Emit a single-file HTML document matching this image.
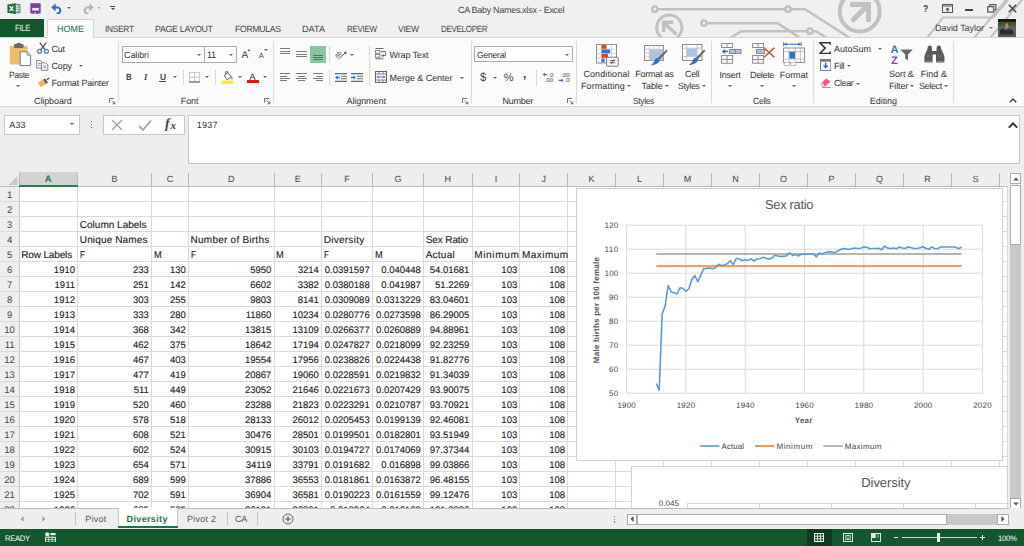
<!DOCTYPE html>
<html><head><meta charset="utf-8"><title>Excel</title>
<style>
*{box-sizing:border-box;margin:0;padding:0}
html,body{width:1024px;height:546px;overflow:hidden;background:#f0f0f0;font-family:"Liberation Sans",sans-serif}
.a{position:absolute;display:block}
.t{position:absolute;display:block;white-space:nowrap;font-family:"Liberation Sans",sans-serif;text-rendering:geometricPrecision}
#ribbon{left:0;top:37px;width:1024px;height:69.5px;background:#fbfbfb;border-top:1px solid #d4d4d4;border-bottom:1px solid #d4d4d4}
.cells .t{-webkit-text-stroke:0.12px #1a1a1a}
#fbar{left:0;top:106.5px;width:1024px;height:66px;background:#eeeeee}
</style></head><body>
<div id="ribbon" class="a"></div>
<div id="fbar" class="a"></div>
<!-- gen_title -->
<svg class="a" style="left:0;top:0" width="1024" height="37" viewBox="0 0 1024 37">
<g fill="none" stroke="#c1c1c1" stroke-width="2.5">
<path d="M658 9.2 H785"/><path d="M791 9.2 H805 L850 38"/>
<circle cx="654.8" cy="9.2" r="2.6" fill="#f0f0f0"/><circle cx="787.9" cy="9.2" r="2.6" fill="#f0f0f0"/>
<path d="M707 23.2 H777.7 L800 38"/><circle cx="704" cy="23.2" r="2.6" fill="#f0f0f0"/>
<path d="M730 38 L741.5 31.2 H807"/><path d="M813 31.2 H816 L827 38"/><circle cx="810" cy="31.2" r="2.6" fill="#f0f0f0"/>
<circle cx="669.3" cy="27.6" r="12.6" stroke-width="3"/>
<circle cx="859.7" cy="11.5" r="20" stroke-width="4"/>
<path d="M927 38 L943 17.5 H993 L1008 0" stroke-width="2"/>
<path d="M974 38 L1006 0" stroke-width="2"/><path d="M990 38 L1022 0" stroke-width="2"/>
</g>
<g fill="#c1c1c1">
<path d="M662 20.6 H673.4 V24 H667.8 L677.6 33.2 L675.2 35.6 L665.4 26.4 V32 H662 Z"/>
<path d="M850 2 H871 V22 H866 V10.5 L853.5 23 L850 19.5 L862.5 7 H850 Z"/>
</g></svg>
<svg class="a" style="left:7.00px;top:3.00px" width="14" height="12" viewBox="0 0 14 12"><path d="M7 1 L13 1.6 V9.6 L7 10.2 Z" fill="#fff" stroke="#2a7a4c" stroke-width="0.9"/><path d="M9.4 3h3.2M9.4 4.8h3.2M9.4 6.6h3.2M9.4 8.4h3.2" stroke="#2a7a4c" stroke-width="0.8"/><path d="M0.4 1.4 L8.8 0.2 V11 L0.4 9.8 Z" fill="#1e6b3e"/><path d="M2.6 3.2 L6.4 8.2 M6.4 3.2 L2.6 8.2" stroke="#fff" stroke-width="1.3"/></svg>
<svg class="a" style="left:30.00px;top:3.00px" width="11" height="11" viewBox="0 0 11 11"><rect x="0.3" y="0.2" width="10.4" height="10.4" rx="0.6" fill="#7b3fa8"/><rect x="2.2" y="4.9" width="6.6" height="2.7" fill="#f4eef8"/><rect x="3" y="8.8" width="4.6" height="1.8" fill="#5a2782"/><rect x="4.4" y="9" width="1.4" height="1.6" fill="#f0f0f0"/></svg>
<svg class="a" style="left:51.00px;top:2.50px" width="13" height="11" viewBox="0 0 13 11"><path d="M2.4 4.4 H7.2 A3.2 3.2 0 0 1 7.2 10.4 H5.6" fill="none" stroke="#2f6bc0" stroke-width="2"/><path d="M0.2 4.4 L4.6 0.6 V8.2 Z" fill="#2f6bc0"/></svg>
<div class="a" style="left:66.50px;top:6.80px;width:0;height:0;border-left:2px solid transparent;border-right:2px solid transparent;border-top:2px solid #666"></div>
<svg class="a" style="left:81.00px;top:2.50px" width="13" height="11" viewBox="0 0 13 11"><path d="M10.6 4.4 H5.8 A3.2 3.2 0 0 0 5.8 10.4 H7.4" fill="none" stroke="#b4b4b4" stroke-width="2"/><path d="M12.8 4.4 L8.4 0.6 V8.2 Z" fill="#b4b4b4"/></svg>
<div class="a" style="left:96.70px;top:6.80px;width:0;height:0;border-left:2px solid transparent;border-right:2px solid transparent;border-top:2px solid #b8b8b8"></div>
<div class="a" style="left:110.40px;top:6.00px;width:5.00px;height:1.10px;background:#444;"></div>
<div class="a" style="left:110.50px;top:8.20px;width:0;height:0;border-left:2.4px solid transparent;border-right:2.4px solid transparent;border-top:2.4px solid #444"></div>
<span class="t" style="left:457.50px;top:5px;font-size:9px;line-height:11px;color:#444;letter-spacing:-0.300px;transform:scaleX(0.9996);transform-origin:0 50%;">CA Baby Names.xlsx - Excel</span>
<span class="t" style="left:922.50px;top:4px;font-size:10px;line-height:12px;color:#444;letter-spacing:-0.300px;transform:scaleX(0.8607);transform-origin:0 50%;font-weight:bold;">?</span>
<svg class="a" style="left:942.00px;top:4.00px" width="11" height="9" viewBox="0 0 11 9"><rect x="0.5" y="0.5" width="10" height="8" fill="none" stroke="#555" stroke-width="1"/><path d="M0.5 2H10.5" stroke="#555" stroke-width="1"/><path d="M5.5 3.4 L7.8 5.6 H6.3 V7.4 H4.7 V5.6 H3.2 Z" fill="#555"/></svg>
<div class="a" style="left:964.50px;top:9.00px;width:8.50px;height:1.60px;background:#444;"></div>
<svg class="a" style="left:986.50px;top:4.00px" width="10" height="9" viewBox="0 0 10 9"><rect x="0.7" y="2.7" width="6" height="5.4" fill="none" stroke="#555" stroke-width="1.2"/><path d="M2.8 2.7 V0.7 H8.9 V6 H6.9" fill="none" stroke="#555" stroke-width="1.2"/></svg>
<svg class="a" style="left:1008.00px;top:4.00px" width="9" height="9" viewBox="0 0 9 9"><path d="M0.8 0.8 L8.2 8.2 M8.2 0.8 L0.8 8.2" stroke="#444" stroke-width="1.5"/></svg>
<span class="t" style="left:935.00px;top:23px;font-size:9px;line-height:11px;color:#444;letter-spacing:-0.033px;">David Taylor</span>
<div class="a" style="left:989.00px;top:26.50px;width:0;height:0;border-left:2px solid transparent;border-right:2px solid transparent;border-top:2px solid #777"></div>
<svg class="a" style="left:998.40px;top:18.80px" width="18" height="17.8" viewBox="0 0 18 17.8"><rect width="18" height="17.8" fill="#55606a"/><rect width="18" height="3" fill="#1a1512"/><rect y="2.8" width="18" height="4.4" fill="#3d5528"/><rect y="6.8" width="18" height="1" fill="#6a6a58"/><path d="M7.6 4.6 L9.6 4.2 L10.6 7.4 L9.4 9.6 L7 9.4 Z" fill="#c08a50"/><path d="M2 11 Q5 8.6 8 11.4 Q11 9 15 11.6 L16 15.4 L2 15.6 Z" fill="#2a2b33"/><rect y="16" width="18" height="1.8" fill="#4c5a46"/></svg>
<div class="a" style="left:0.00px;top:19.00px;width:44.20px;height:18.30px;background:#15572c;"></div>
<span class="t" style="left:14.60px;top:23px;font-size:9px;line-height:11px;color:#e4efe7;letter-spacing:-0.300px;transform:scaleX(0.8449);transform-origin:0 50%;">FILE</span>
<div class="a" style="left:47.00px;top:19.00px;width:46.50px;height:19.00px;background:#fcfcfc;border:1px solid #d4d4d4;border-bottom:none;"></div>
<span class="t" style="left:57.00px;top:24px;font-size:9px;line-height:11px;color:#217346;letter-spacing:-0.001px;">HOME</span>
<span class="t" style="left:104.50px;top:24px;font-size:9px;line-height:11px;color:#444;letter-spacing:-0.300px;transform:scaleX(0.9252);transform-origin:0 50%;">INSERT</span>
<span class="t" style="left:155.00px;top:24px;font-size:9px;line-height:11px;color:#444;letter-spacing:-0.300px;transform:scaleX(0.9799);transform-origin:0 50%;">PAGE LAYOUT</span>
<span class="t" style="left:234.50px;top:24px;font-size:9px;line-height:11px;color:#444;letter-spacing:-0.300px;transform:scaleX(0.9601);transform-origin:0 50%;">FORMULAS</span>
<span class="t" style="left:302.00px;top:24px;font-size:9px;line-height:11px;color:#444;letter-spacing:0.110px;">DATA</span>
<span class="t" style="left:347.00px;top:24px;font-size:9px;line-height:11px;color:#444;letter-spacing:-0.300px;transform:scaleX(0.8822);transform-origin:0 50%;">REVIEW</span>
<span class="t" style="left:398.00px;top:24px;font-size:9px;line-height:11px;color:#444;letter-spacing:-0.300px;transform:scaleX(0.9501);transform-origin:0 50%;">VIEW</span>
<span class="t" style="left:441.00px;top:24px;font-size:9px;line-height:11px;color:#444;letter-spacing:-0.300px;transform:scaleX(0.8836);transform-origin:0 50%;">DEVELOPER</span>
<!-- gen_ribbon -->
<div class="a" style="left:117.70px;top:41.00px;width:1.00px;height:62.00px;background:#dadada;"></div>
<div class="a" style="left:273.10px;top:41.00px;width:1.00px;height:62.00px;background:#dadada;"></div>
<div class="a" style="left:471.00px;top:41.00px;width:1.00px;height:62.00px;background:#dadada;"></div>
<div class="a" style="left:575.50px;top:41.00px;width:1.00px;height:62.00px;background:#dadada;"></div>
<div class="a" style="left:711.30px;top:41.00px;width:1.00px;height:62.00px;background:#dadada;"></div>
<div class="a" style="left:813.20px;top:41.00px;width:1.00px;height:62.00px;background:#dadada;"></div>
<div class="a" style="left:953.20px;top:41.00px;width:1.00px;height:62.00px;background:#dadada;"></div>
<svg class="a" style="left:9.00px;top:43.00px" width="23" height="24" viewBox="0 0 23 24"><rect x="0.8" y="3" width="17.5" height="18.5" rx="1" fill="#e9bd6a"/>
<rect x="5" y="1" width="9.5" height="4" rx="0.8" fill="#6a6a6a"/><rect x="7.6" y="0" width="4.2" height="2.5" rx="1" fill="#6a6a6a"/>
<path d="M11.2 8.8 H18.2 L21.6 12.2 V22.6 H11.2 Z" fill="#fff" stroke="#7a7a7a" stroke-width="1"/><path d="M18.2 8.8 V12.2 H21.6" fill="none" stroke="#7a7a7a" stroke-width="0.8"/></svg>
<span class="t" style="left:8.60px;top:70px;font-size:9px;line-height:11px;color:#333;letter-spacing:-0.300px;transform:scaleX(0.9443);transform-origin:0 50%;">Paste</span>
<div class="a" style="left:16.20px;top:84.50px;width:0;height:0;border-left:2.2px solid transparent;border-right:2.2px solid transparent;border-top:2.2px solid #666"></div>
<svg class="a" style="left:36.50px;top:42.00px" width="12" height="12" viewBox="0 0 12 12"><path d="M2.8 0.6 L8.6 8.4 M9.2 0.6 L3.4 8.4" stroke="#555" stroke-width="1.3" fill="none"/><circle cx="2.6" cy="9.2" r="2" fill="none" stroke="#3b73c4" stroke-width="1.1"/><circle cx="9.4" cy="9.2" r="2" fill="none" stroke="#3b73c4" stroke-width="1.1"/></svg>
<span class="t" style="left:51.50px;top:44px;font-size:9px;line-height:11px;color:#333;letter-spacing:-0.253px;">Cut</span>
<svg class="a" style="left:36.00px;top:60.00px" width="12.5" height="11" viewBox="0 0 12.5 11"><path d="M0.6 0.6 H4.6 L6.6 2.6 V8 H0.6 Z" fill="#fff" stroke="#777" stroke-width="0.9"/><path d="M5.4 2.8 H9.6 L11.8 5 V10.4 H5.4 Z" fill="#fff" stroke="#777" stroke-width="0.9"/><path d="M2 3.4h2.6M2 5.2h2.6M7 6h3.4M7 7.8h3.4" stroke="#4a7fcb" stroke-width="0.8"/></svg>
<span class="t" style="left:51.50px;top:61px;font-size:9px;line-height:11px;color:#333;letter-spacing:-0.171px;">Copy</span>
<div class="a" style="left:79.00px;top:65.00px;width:0;height:0;border-left:2px solid transparent;border-right:2px solid transparent;border-top:2px solid #666"></div>
<svg class="a" style="left:36.50px;top:77.00px" width="13" height="11" viewBox="0 0 13 11"><path d="M1 5.8 L6.2 2.6 L9 7 L3.8 10.2 Z" fill="#e7b45b"/><path d="M6.2 2.6 L8.2 1.4 L11 5.8 L9 7 Z" fill="#555"/><path d="M9.4 2 L11.8 0.4 L12.6 1.6 L10.2 3.2 Z" fill="#555"/></svg>
<span class="t" style="left:51.50px;top:78px;font-size:9px;line-height:11px;color:#333;letter-spacing:-0.156px;">Format Painter</span>
<span class="t" style="left:34.00px;top:96px;font-size:9px;line-height:11px;color:#333;letter-spacing:-0.103px;">Clipboard</span>
<svg class="a" style="left:109.00px;top:98.00px" width="7" height="7" viewBox="0 0 7 7"><path d="M0.5 5 V0.5 H5" fill="none" stroke="#777" stroke-width="1"/><path d="M2.5 2.5 L5.6 5.6" stroke="#777" stroke-width="1"/><path d="M6.3 3.2 V6.3 H3.2 Z" fill="#777"/></svg>
<div class="a" style="left:121.50px;top:46.00px;width:115.00px;height:16.50px;background:#fff;border:1px solid #ababab;"></div>
<div class="a" style="left:204.00px;top:46.00px;width:1.00px;height:16.50px;background:#ababab;"></div>
<span class="t" style="left:124.00px;top:50px;font-size:9px;line-height:11px;color:#333;letter-spacing:-0.085px;">Calibri</span>
<div class="a" style="left:196.80px;top:53.50px;width:0;height:0;border-left:2px solid transparent;border-right:2px solid transparent;border-top:2px solid #666"></div>
<span class="t" style="left:207.20px;top:50px;font-size:9.5px;line-height:11px;color:#333;letter-spacing:-0.300px;transform:scaleX(0.9622);transform-origin:0 50%;">11</span>
<div class="a" style="left:229.00px;top:53.50px;width:0;height:0;border-left:2px solid transparent;border-right:2px solid transparent;border-top:2px solid #666"></div>
<span class="t" style="left:241.60px;top:50px;font-size:10px;line-height:12px;color:#3a3a3a;letter-spacing:0.530px;">A</span>
<svg class="a" style="left:247.40px;top:48.80px" width="3.8" height="2.2" viewBox="0 0 3.8 2.2"><path d="M0 2.2 L1.9 0 L3.8 2.2 Z" fill="#3b73c4"/></svg>
<span class="t" style="left:258.70px;top:51px;font-size:7.5px;line-height:9px;color:#3a3a3a;letter-spacing:0.798px;">A</span>
<svg class="a" style="left:263.80px;top:48.60px" width="3.8" height="2.2" viewBox="0 0 3.8 2.2"><path d="M0 0 L1.9 2.2 L3.8 0 Z" fill="#3b73c4"/></svg>
<span class="t" style="left:126.30px;top:72px;font-size:9px;line-height:11px;color:#444;letter-spacing:-0.300px;transform:scaleX(0.8871);transform-origin:0 50%;font-weight:bold;">B</span>
<span class="t" style="left:144.20px;top:72px;font-size:9px;line-height:11px;color:#444;letter-spacing:-0.300px;transform:scaleX(0.9369);transform-origin:0 50%;font-weight:bold;font-style:italic;font-family:'Liberation Serif',serif;">I</span>
<span class="t" style="left:159.50px;top:72px;font-size:9px;line-height:11px;color:#444;letter-spacing:-0.300px;transform:scaleX(0.9355);transform-origin:0 50%;font-weight:bold;">U</span>
<div class="a" style="left:159.30px;top:81.30px;width:6.40px;height:1.00px;background:#444;"></div>
<div class="a" style="left:173.00px;top:76.30px;width:0;height:0;border-left:2px solid transparent;border-right:2px solid transparent;border-top:2px solid #666"></div>
<div class="a" style="left:183.00px;top:69.50px;width:1.00px;height:15.00px;background:#dadada;"></div>
<svg class="a" style="left:189.00px;top:72.00px" width="11" height="10.5" viewBox="0 0 11 10.5"><rect x="0.5" y="0.5" width="10" height="9.5" fill="none" stroke="#9a9a9a" stroke-width="1" stroke-dasharray="1 1"/><path d="M5.5 0.5V10M0.5 5.2H10.5" stroke="#9a9a9a" stroke-width="1" stroke-dasharray="1 1"/><path d="M0 10H11" stroke="#555" stroke-width="1"/></svg>
<div class="a" style="left:205.40px;top:76.30px;width:0;height:0;border-left:2px solid transparent;border-right:2px solid transparent;border-top:2px solid #666"></div>
<div class="a" style="left:215.00px;top:69.50px;width:1.00px;height:15.00px;background:#dadada;"></div>
<svg class="a" style="left:221.00px;top:70.50px" width="13" height="13.5" viewBox="0 0 13 13.5"><path d="M3.2 4.4 L6.4 1.6 L10.2 5.6 L6.2 8.8 Z" fill="#fff" stroke="#555" stroke-width="1"/><path d="M4.6 3 V1.2 A1.1 1.1 0 0 1 6.8 1.2 V2.4" fill="none" stroke="#555" stroke-width="0.9"/><path d="M10.4 5 Q12.4 6.4 11.2 8.8 Q9.6 7.4 10.4 5Z" fill="#3b73c4"/><rect x="0.5" y="9.7" width="11.6" height="3.2" fill="#ffee00"/></svg>
<div class="a" style="left:237.50px;top:76.30px;width:0;height:0;border-left:2px solid transparent;border-right:2px solid transparent;border-top:2px solid #666"></div>
<span class="t" style="left:249.20px;top:72px;font-size:9.5px;line-height:11px;color:#3a3a3a;letter-spacing:0.964px;">A</span>
<div class="a" style="left:246.80px;top:80.10px;width:11.80px;height:3.30px;background:#ee1111;"></div>
<div class="a" style="left:263.20px;top:76.30px;width:0;height:0;border-left:2px solid transparent;border-right:2px solid transparent;border-top:2px solid #666"></div>
<span class="t" style="left:180.80px;top:96px;font-size:9px;line-height:11px;color:#333;letter-spacing:-0.103px;">Font</span>
<svg class="a" style="left:264.00px;top:98.00px" width="7" height="7" viewBox="0 0 7 7"><path d="M0.5 5 V0.5 H5" fill="none" stroke="#777" stroke-width="1"/><path d="M2.5 2.5 L5.6 5.6" stroke="#777" stroke-width="1"/><path d="M6.3 3.2 V6.3 H3.2 Z" fill="#777"/></svg>
<div class="a" style="left:279.80px;top:48.30px;width:10.40px;height:1.10px;background:#7a7a7a;"></div><div class="a" style="left:279.80px;top:50.70px;width:10.40px;height:1.10px;background:#7a7a7a;"></div><div class="a" style="left:279.80px;top:53.10px;width:10.40px;height:1.10px;background:#7a7a7a;"></div>
<div class="a" style="left:296.20px;top:51.40px;width:10.40px;height:1.10px;background:#7a7a7a;"></div><div class="a" style="left:296.20px;top:53.80px;width:10.40px;height:1.10px;background:#7a7a7a;"></div><div class="a" style="left:296.20px;top:56.20px;width:10.40px;height:1.10px;background:#7a7a7a;"></div>
<div class="a" style="left:309.60px;top:45.60px;width:16.60px;height:17.60px;background:#86c7a0;"></div>
<div class="a" style="left:312.60px;top:54.60px;width:10.60px;height:1.10px;background:#4d7a5f;"></div><div class="a" style="left:312.60px;top:57.00px;width:10.60px;height:1.10px;background:#4d7a5f;"></div><div class="a" style="left:312.60px;top:59.40px;width:10.60px;height:1.10px;background:#4d7a5f;"></div>
<div class="a" style="left:329.00px;top:46.00px;width:1.00px;height:16.00px;background:#dadada;"></div>
<svg class="a" style="left:335.00px;top:48.50px" width="13" height="11" viewBox="0 0 13 11"><text x="0" y="7" font-family="Liberation Sans" font-size="6.5" fill="#555" transform="rotate(-40 4 6)">ab</text><path d="M3.4 10 L10.8 3.4" stroke="#555" stroke-width="1"/><path d="M11.8 2.4 L8.8 3.2 L10.8 5.4 Z" fill="#555"/></svg>
<div class="a" style="left:350.00px;top:53.50px;width:0;height:0;border-left:2px solid transparent;border-right:2px solid transparent;border-top:2px solid #666"></div>
<div class="a" style="left:369.00px;top:45.00px;width:1.00px;height:40.00px;background:#dadada;"></div>
<svg class="a" style="left:375.00px;top:48.00px" width="12" height="11.5" viewBox="0 0 12 11.5"><path d="M0.5 0.5H8.5M0.5 10.8H8.5" stroke="#666" stroke-width="1"/><rect x="0.5" y="2.6" width="4.4" height="2.6" fill="#fff" stroke="#666" stroke-width="0.8"/><rect x="0.5" y="6.6" width="4.4" height="2.6" fill="#fff" stroke="#666" stroke-width="0.8"/><path d="M6 3.6 H10.6 V7.6 H7.6" fill="none" stroke="#3b73c4" stroke-width="1"/><path d="M8.4 5.8 L6.2 7.6 L8.4 9.4Z" fill="#3b73c4"/></svg>
<span class="t" style="left:389.60px;top:50px;font-size:9px;line-height:11px;color:#333;letter-spacing:-0.161px;">Wrap Text</span>
<div class="a" style="left:279.80px;top:73.20px;width:10.40px;height:1.10px;background:#7a7a7a;"></div><div class="a" style="left:279.80px;top:75.60px;width:7.00px;height:1.10px;background:#7a7a7a;"></div><div class="a" style="left:279.80px;top:78.00px;width:10.40px;height:1.10px;background:#7a7a7a;"></div><div class="a" style="left:279.80px;top:80.40px;width:7.00px;height:1.10px;background:#7a7a7a;"></div>
<div class="a" style="left:296.20px;top:73.20px;width:10.40px;height:1.10px;background:#7a7a7a;"></div><div class="a" style="left:297.90px;top:75.60px;width:7.00px;height:1.10px;background:#7a7a7a;"></div><div class="a" style="left:296.20px;top:78.00px;width:10.40px;height:1.10px;background:#7a7a7a;"></div><div class="a" style="left:297.90px;top:80.40px;width:7.00px;height:1.10px;background:#7a7a7a;"></div>
<div class="a" style="left:312.60px;top:73.20px;width:10.40px;height:1.10px;background:#7a7a7a;"></div><div class="a" style="left:316.00px;top:75.60px;width:7.00px;height:1.10px;background:#7a7a7a;"></div><div class="a" style="left:312.60px;top:78.00px;width:10.40px;height:1.10px;background:#7a7a7a;"></div><div class="a" style="left:316.00px;top:80.40px;width:7.00px;height:1.10px;background:#7a7a7a;"></div>
<div class="a" style="left:329.00px;top:70.00px;width:1.00px;height:15.00px;background:#dadada;"></div>
<svg class="a" style="left:335.00px;top:72.50px" width="12.5" height="9.5" viewBox="0 0 12.5 9.5"><path d="M0 0.6H12M6 3.2H12M6 5.8H12M0 8.4H12" stroke="#666" stroke-width="1.1"/><path d="M0 4.5 L2.6 2.2 V3.8 H5 V5.2 H2.6 V6.8 Z" fill="#3b73c4"/></svg>
<svg class="a" style="left:351.20px;top:72.50px" width="12.5" height="9.5" viewBox="0 0 12.5 9.5"><path d="M0 0.6H12M6 3.2H12M6 5.8H12M0 8.4H12" stroke="#666" stroke-width="1.1"/><path d="M5 4.5 L2.4 2.2 V3.8 H0 V5.2 H2.4 V6.8 Z" fill="#3b73c4"/></svg>
<svg class="a" style="left:375.00px;top:71.00px" width="12" height="12" viewBox="0 0 12 12"><rect x="0.5" y="0.5" width="11" height="11" fill="#fff" stroke="#666" stroke-width="1"/><path d="M0.5 3H11.5M0.5 9H11.5M4 0.5V3M8 0.5V3M4 9V11.5M8 9V11.5" stroke="#666" stroke-width="0.8"/><path d="M2.6 6H9.4" stroke="#3b73c4" stroke-width="1"/><path d="M1.6 6 L3.6 4.4 V7.6Z M10.4 6 L8.4 4.4 V7.6Z" fill="#3b73c4"/></svg>
<span class="t" style="left:389.60px;top:73px;font-size:9px;line-height:11px;color:#333;letter-spacing:-0.049px;">Merge &amp; Center</span>
<div class="a" style="left:460.00px;top:77.00px;width:0;height:0;border-left:2px solid transparent;border-right:2px solid transparent;border-top:2px solid #666"></div>
<span class="t" style="left:346.50px;top:96px;font-size:9px;line-height:11px;color:#333;letter-spacing:-0.078px;">Alignment</span>
<svg class="a" style="left:461.80px;top:98.00px" width="7" height="7" viewBox="0 0 7 7"><path d="M0.5 5 V0.5 H5" fill="none" stroke="#777" stroke-width="1"/><path d="M2.5 2.5 L5.6 5.6" stroke="#777" stroke-width="1"/><path d="M6.3 3.2 V6.3 H3.2 Z" fill="#777"/></svg>
<div class="a" style="left:474.40px;top:45.80px;width:98.60px;height:16.70px;background:#fff;border:1px solid #ababab;"></div>
<span class="t" style="left:477.30px;top:50px;font-size:9px;line-height:11px;color:#333;letter-spacing:-0.300px;transform:scaleX(0.9629);transform-origin:0 50%;">General</span>
<div class="a" style="left:565.00px;top:53.50px;width:0;height:0;border-left:2px solid transparent;border-right:2px solid transparent;border-top:2px solid #666"></div>
<span class="t" style="left:480.00px;top:70px;font-size:12px;line-height:14px;color:#444;letter-spacing:-0.300px;transform:scaleX(0.9413);transform-origin:0 50%;">$</span>
<div class="a" style="left:493.00px;top:76.50px;width:0;height:0;border-left:2px solid transparent;border-right:2px solid transparent;border-top:2px solid #666"></div>
<span class="t" style="left:503.80px;top:72px;font-size:11px;line-height:13px;color:#444;letter-spacing:-0.281px;">%</span>
<span class="t" style="left:522.50px;top:66px;font-size:13px;line-height:15px;color:#444;letter-spacing:-0.300px;transform:scaleX(0.9060);transform-origin:0 50%;font-weight:bold;">,</span>
<div class="a" style="left:536.20px;top:69.50px;width:1.00px;height:16.00px;background:#dadada;"></div>
<svg class="a" style="left:541.50px;top:71.50px" width="12.5" height="11" viewBox="0 0 12.5 11"><path d="M0.6 2.6 L3 0.6 V2 H5.4 V3.2 H3 V4.6Z" fill="#3b73c4"/><text x="6.4" y="4.6" font-family="Liberation Sans" font-size="6.2" fill="#444">.0</text><text x="2.6" y="10.4" font-family="Liberation Sans" font-size="6.2" fill="#444">.00</text></svg>
<svg class="a" style="left:557.50px;top:71.50px" width="12.5" height="11" viewBox="0 0 12.5 11"><text x="3" y="4.6" font-family="Liberation Sans" font-size="6.2" fill="#444">.00</text><path d="M5.6 8.4 L3.2 6.4 V7.8 H0.6 V9 H3.2 V10.4Z" fill="#3b73c4"/><text x="6.6" y="10.4" font-family="Liberation Sans" font-size="6.2" fill="#444">.0</text></svg>
<span class="t" style="left:502.50px;top:96px;font-size:9px;line-height:11px;color:#333;letter-spacing:-0.263px;">Number</span>
<svg class="a" style="left:566.70px;top:98.00px" width="7" height="7" viewBox="0 0 7 7"><path d="M0.5 5 V0.5 H5" fill="none" stroke="#777" stroke-width="1"/><path d="M2.5 2.5 L5.6 5.6" stroke="#777" stroke-width="1"/><path d="M6.3 3.2 V6.3 H3.2 Z" fill="#777"/></svg>
<!-- gen_ribbon2 -->
<svg class="a" style="left:596.00px;top:43.50px" width="23" height="23" viewBox="0 0 23 23"><rect x="0.5" y="0.5" width="20" height="18.5" fill="#fff" stroke="#8a8a8a" stroke-width="1"/>
<path d="M0.5 5.1H20.5M0.5 9.7H20.5M0.5 14.3H20.5M5.5 0.5V19M10.5 0.5V19M15.5 0.5V19" stroke="#c8c8c8" stroke-width="0.8"/>
<rect x="5.6" y="1" width="4.6" height="3.8" fill="#d8452e"/><rect x="5.6" y="5.5" width="8.6" height="3.8" fill="#3b73c4"/><rect x="5.6" y="10" width="6.4" height="3.8" fill="#d8452e"/><rect x="5.6" y="14.6" width="3" height="3.8" fill="#3b73c4"/>
<rect x="10.6" y="13.2" width="11.6" height="9" rx="0.8" fill="#fff" stroke="#777" stroke-width="1"/>
<path d="M13.6 16.6H19.4M13.6 18.8H19.4M18 15.2L15 20.2" stroke="#555" stroke-width="0.9"/></svg>
<span class="t" style="left:583.40px;top:69px;font-size:9px;line-height:11px;color:#333;letter-spacing:0.096px;">Conditional</span>
<span class="t" style="left:581.00px;top:81px;font-size:9px;line-height:11px;color:#333;letter-spacing:0.076px;">Formatting</span>
<div class="a" style="left:627.00px;top:85.30px;width:0;height:0;border-left:2px solid transparent;border-right:2px solid transparent;border-top:2px solid #666"></div>
<svg class="a" style="left:644.00px;top:44.50px" width="24" height="22" viewBox="0 0 24 22"><rect x="0.5" y="0.5" width="19" height="15" fill="#fff" stroke="#8a8a8a" stroke-width="1"/>
<rect x="5.4" y="4.4" width="14" height="11" fill="#a9c4e8"/>
<path d="M0.5 4.3H19.5M0.5 8H19.5M0.5 11.7H19.5M5.3 0.5V15.5M10 0.5V15.5M14.8 0.5V15.5" stroke="#c4c4c4" stroke-width="0.8"/>
<path d="M22.6 4.6 L23.6 6 L15.6 14.6 L13.8 13 Z" fill="#666"/>
<path d="M13.6 13 L15.8 15 Q14.8 19.6 6.4 20.6 Q10.4 17.4 10.6 15.2 Q11.6 12.6 13.6 13Z" fill="#2f6fc6"/></svg>
<span class="t" style="left:635.30px;top:69px;font-size:9px;line-height:11px;color:#333;letter-spacing:-0.251px;">Format as</span>
<span class="t" style="left:641.60px;top:81px;font-size:9px;line-height:11px;color:#333;letter-spacing:-0.079px;">Table</span>
<div class="a" style="left:665.00px;top:85.30px;width:0;height:0;border-left:2px solid transparent;border-right:2px solid transparent;border-top:2px solid #666"></div>
<svg class="a" style="left:681.50px;top:43.50px" width="24" height="22" viewBox="0 0 24 22"><rect x="0.5" y="0.5" width="19.5" height="16" fill="#fff" stroke="#8a8a8a" stroke-width="1"/>
<path d="M0.5 4.2H20M0.5 12.4H20M4.6 0.5V16.5M15.2 0.5V16.5" stroke="#b8b8b8" stroke-width="0.8"/>
<rect x="5" y="4.6" width="9.8" height="7.4" fill="#a9c4e8"/>
<path d="M22.2 5.4 L23.4 6.8 L16 15.2 L14.2 13.6 Z" fill="#666"/>
<path d="M14 13.6 L16.2 15.6 Q15.2 20.2 6.8 21.2 Q10.8 18 11 15.8 Q12 13.2 14 13.6Z" fill="#2f6fc6"/></svg>
<span class="t" style="left:684.50px;top:69px;font-size:9px;line-height:11px;color:#333;letter-spacing:-0.300px;transform:scaleX(0.9928);transform-origin:0 50%;">Cell</span>
<span class="t" style="left:677.80px;top:81px;font-size:9px;line-height:11px;color:#333;letter-spacing:-0.300px;transform:scaleX(0.9518);transform-origin:0 50%;">Styles</span>
<div class="a" style="left:702.30px;top:85.30px;width:0;height:0;border-left:2px solid transparent;border-right:2px solid transparent;border-top:2px solid #666"></div>
<span class="t" style="left:632.80px;top:96px;font-size:9px;line-height:11px;color:#333;letter-spacing:-0.300px;transform:scaleX(0.9213);transform-origin:0 50%;">Styles</span>
<svg class="a" style="left:720.50px;top:43.20px" width="21" height="21" viewBox="0 0 21 21"><rect x="0.6" y="0.6" width="11" height="3.8" fill="#fff" stroke="#7f7f7f" stroke-width="0.9"/><path d="M6.1 0.6V4.4" stroke="#7f7f7f" stroke-width="0.9"/>
<rect x="8.6" y="6.4" width="11.4" height="4" fill="#a9c4e8" stroke="#7f7f7f" stroke-width="0.9"/><path d="M14.3 6.4V10.4" stroke="#7f7f7f" stroke-width="0.9"/>
<path d="M0.8 8.4 L3.8 5.8 V7.6 H6.8 V9.2 H3.8 V11Z" fill="#2f6fc6"/>
<rect x="0.6" y="12.6" width="11" height="7.6" fill="#fff" stroke="#7f7f7f" stroke-width="0.9"/><path d="M6.1 12.6V20.2M0.6 16.4H11.6" stroke="#7f7f7f" stroke-width="0.9"/></svg>
<span class="t" style="left:719.60px;top:70px;font-size:9px;line-height:11px;color:#333;letter-spacing:-0.262px;">Insert</span>
<div class="a" style="left:728.20px;top:84.50px;width:0;height:0;border-left:2.2px solid transparent;border-right:2.2px solid transparent;border-top:2.2px solid #666"></div>
<svg class="a" style="left:751.50px;top:43.20px" width="24" height="21" viewBox="0 0 24 21"><rect x="0.6" y="0.6" width="11" height="3.8" fill="#fff" stroke="#7f7f7f" stroke-width="0.9"/><path d="M6.1 0.6V4.4" stroke="#7f7f7f" stroke-width="0.9"/>
<rect x="4.6" y="6.4" width="8" height="4" fill="#a9c4e8" stroke="#7f7f7f" stroke-width="0.9"/>
<path d="M12 4.8 L22.4 14.2 M22.4 4.8 L12 14.2" stroke="#d8452e" stroke-width="1.5"/>
<rect x="0.6" y="12.6" width="11" height="7.6" fill="#fff" stroke="#7f7f7f" stroke-width="0.9"/><path d="M6.1 12.6V20.2M0.6 16.4H11.6" stroke="#7f7f7f" stroke-width="0.9"/></svg>
<span class="t" style="left:749.90px;top:70px;font-size:9px;line-height:11px;color:#333;letter-spacing:-0.300px;transform:scaleX(0.9911);transform-origin:0 50%;">Delete</span>
<div class="a" style="left:759.80px;top:84.50px;width:0;height:0;border-left:2.2px solid transparent;border-right:2.2px solid transparent;border-top:2.2px solid #666"></div>
<svg class="a" style="left:783.00px;top:42.00px" width="23" height="24.5" viewBox="0 0 23 24.5"><path d="M1 2.2H17.8" stroke="#2f6fc6" stroke-width="1"/><path d="M0.6 0.2V4.2M18.2 0.2V4.2" stroke="#2f6fc6" stroke-width="0.9"/><path d="M1.2 2.2L3.6 0.4V4Z M17.6 2.2L15.2 0.4V4Z" fill="#2f6fc6"/>
<rect x="0.6" y="6" width="21" height="14.4" fill="#fff" stroke="#7f7f7f" stroke-width="0.9"/>
<path d="M0.6 9.4H21.6M0.6 17H21.6M6 6V20.4M12.4 6V20.4M17.6 6V20.4" stroke="#b4b4b4" stroke-width="0.8"/>
<rect x="6.4" y="9.8" width="5.6" height="6.8" fill="#2f6fc6"/>
<path d="M1.2 20.4 V22.6 Q1.2 23.6 2.2 23.6 H5.6 Q6.6 23.6 6.6 22.6 V20.4M7.6 20.4 V22.6 Q7.6 23.6 8.6 23.6 H12 Q13 23.6 13 22.6 V20.4" fill="#fff" stroke="#9a9a9a" stroke-width="0.8"/></svg>
<span class="t" style="left:779.80px;top:70px;font-size:9px;line-height:11px;color:#333;letter-spacing:-0.061px;">Format</span>
<div class="a" style="left:791.80px;top:84.50px;width:0;height:0;border-left:2.2px solid transparent;border-right:2.2px solid transparent;border-top:2.2px solid #666"></div>
<span class="t" style="left:753.30px;top:96px;font-size:9px;line-height:11px;color:#333;letter-spacing:-0.300px;transform:scaleX(0.9518);transform-origin:0 50%;">Cells</span>
<svg class="a" style="left:819.00px;top:41.80px" width="12.5" height="12.5" viewBox="0 0 12.5 12.5"><path d="M11.2 2.8 V0.8 H0.9 L6.2 6.1 L0.9 11.4 H11.2 V9.4" fill="none" stroke="#333" stroke-width="1.5"/></svg>
<span class="t" style="left:834.00px;top:44px;font-size:9px;line-height:11px;color:#333;letter-spacing:-0.004px;">AutoSum</span>
<div class="a" style="left:878.20px;top:48.00px;width:0;height:0;border-left:2px solid transparent;border-right:2px solid transparent;border-top:2px solid #666"></div>
<svg class="a" style="left:819.80px;top:59.20px" width="11.5" height="12" viewBox="0 0 11.5 12"><rect x="0.5" y="0.5" width="10.4" height="11" fill="#fff" stroke="#7a7a7a" stroke-width="1"/><rect x="0.5" y="0.5" width="10.4" height="2.2" fill="#7a7a7a"/><path d="M5.7 3.6V8" stroke="#2f6fc6" stroke-width="1.6"/><path d="M2.8 6.6 L5.7 9.8 L8.6 6.6Z" fill="#2f6fc6"/></svg>
<span class="t" style="left:834.00px;top:61px;font-size:9px;line-height:11px;color:#333;letter-spacing:-0.299px;">Fill</span>
<div class="a" style="left:847.00px;top:65.20px;width:0;height:0;border-left:2px solid transparent;border-right:2px solid transparent;border-top:2px solid #666"></div>
<svg class="a" style="left:820.00px;top:77.50px" width="11.5" height="10.5" viewBox="0 0 11.5 10.5"><path d="M0.6 5.6 L6 0.6 L10.6 3.6 L5 8.8 H2.6 Z" fill="#e85f84"/><path d="M0.6 5.6 L2.6 8.8 H5 L2.8 4Z" fill="#f6b3c4"/><path d="M2 9.8H10.6" stroke="#777" stroke-width="1"/></svg>
<span class="t" style="left:834.00px;top:78px;font-size:9px;line-height:11px;color:#333;letter-spacing:-0.300px;transform:scaleX(0.9700);transform-origin:0 50%;">Clear</span>
<div class="a" style="left:856.00px;top:82.60px;width:0;height:0;border-left:2px solid transparent;border-right:2px solid transparent;border-top:2px solid #666"></div>
<span class="t" style="left:890.40px;top:44px;font-size:11px;line-height:13px;color:#2f6fc6;letter-spacing:0.657px;font-weight:bold;">A</span>
<span class="t" style="left:891.00px;top:55px;font-size:11px;line-height:13px;color:#8e44ad;letter-spacing:0.681px;font-weight:bold;">Z</span>
<svg class="a" style="left:899.50px;top:49.00px" width="13.5" height="12.5" viewBox="0 0 13.5 12.5"><path d="M0.4 0.6 H12.8 L8 5.6 V11.4 L5.2 9.6 V5.6 Z" fill="#666"/></svg>
<span class="t" style="left:889.00px;top:69px;font-size:9px;line-height:11px;color:#333;letter-spacing:-0.042px;">Sort &amp;</span>
<span class="t" style="left:889.00px;top:81px;font-size:9px;line-height:11px;color:#333;letter-spacing:-0.140px;">Filter</span>
<div class="a" style="left:910.30px;top:85.30px;width:0;height:0;border-left:2px solid transparent;border-right:2px solid transparent;border-top:2px solid #666"></div>
<svg class="a" style="left:923.50px;top:44.50px" width="21" height="18.5" viewBox="0 0 21 18.5"><path d="M3.6 3.4 Q3.6 0.6 5.8 0.6 Q8 0.6 8 3.4 V6 H12.6 V3.4 Q12.6 0.6 14.8 0.6 Q17 0.6 17 3.4 L20.4 11 V17.2 H12 V9.4 H8.6 V17.2 H0.4 V11 Z" fill="#5a5a5a"/><rect x="1" y="16" width="7" height="1.6" fill="#8a8a8a"/><rect x="12.6" y="16" width="7" height="1.6" fill="#8a8a8a"/><path d="M2.4 11H6.6M14 11H18.2" stroke="#8a8a8a" stroke-width="0.8"/></svg>
<span class="t" style="left:920.80px;top:69px;font-size:9px;line-height:11px;color:#333;letter-spacing:0.017px;">Find &amp;</span>
<span class="t" style="left:918.90px;top:81px;font-size:9px;line-height:11px;color:#333;letter-spacing:-0.300px;transform:scaleX(0.9823);transform-origin:0 50%;">Select</span>
<div class="a" style="left:944.40px;top:85.30px;width:0;height:0;border-left:2px solid transparent;border-right:2px solid transparent;border-top:2px solid #666"></div>
<span class="t" style="left:869.80px;top:96px;font-size:9px;line-height:11px;color:#333;letter-spacing:-0.054px;">Editing</span>
<svg class="a" style="left:1009.00px;top:98.40px" width="8" height="5" viewBox="0 0 8 5"><path d="M0.8 4.2 L4 1 L7.2 4.2" fill="none" stroke="#444" stroke-width="1.5"/></svg>
<!-- gen_grid -->
<div class="a" style="left:3.80px;top:115.00px;width:76.40px;height:19.50px;background:#fff;border:1px solid #c8c8c8;"></div>
<span class="t" style="left:9.20px;top:120px;font-size:9px;line-height:11px;color:#333;letter-spacing:0.192px;">A33</span>
<div class="a" style="left:69.70px;top:122.70px;width:0;height:0;border-left:2.6px solid transparent;border-right:2.6px solid transparent;border-top:2.6px solid #555"></div>
<div class="a" style="left:91.00px;top:121.20px;width:1.20px;height:1.20px;background:#777;"></div>
<div class="a" style="left:91.00px;top:124.00px;width:1.20px;height:1.20px;background:#777;"></div>
<div class="a" style="left:91.00px;top:126.80px;width:1.20px;height:1.20px;background:#777;"></div>
<div class="a" style="left:103.00px;top:115.00px;width:82.00px;height:19.50px;background:#fdfdfd;border:1px solid #c8c8c8;"></div>
<svg class="a" style="left:111.00px;top:119.00px" width="12" height="12" viewBox="0 0 12 12"><path d="M1 1 L11 11 M11 1 L1 11" stroke="#a0a0a0" stroke-width="1.3"/></svg>
<svg class="a" style="left:137.50px;top:119.00px" width="14" height="12" viewBox="0 0 14 12"><path d="M1 7 L5 11 L13 1.4" fill="none" stroke="#a8a8a8" stroke-width="1.8"/></svg>
<span class="t" style="left:165.00px;top:117px;font-size:14px;line-height:16px;color:#444;letter-spacing:1.838px;font-weight:bold;font-style:italic;font-family:'Liberation Serif',serif;">f</span>
<span class="t" style="left:170.60px;top:120px;font-size:11px;line-height:13px;color:#444;letter-spacing:0.500px;font-weight:bold;font-style:italic;font-family:'Liberation Serif',serif;">x</span>
<div class="a" style="left:187.50px;top:114.50px;width:832.50px;height:49.50px;background:#fff;border:1px solid #c8c8c8;"></div>
<span class="t" style="left:196.80px;top:120px;font-size:9px;line-height:11px;color:#333;letter-spacing:0.192px;">1937</span>
<svg class="a" style="left:1008.00px;top:121.50px" width="10" height="6.5" viewBox="0 0 10 6.5"><path d="M0.8 5.6 L5 1.4 L9.2 5.6" fill="none" stroke="#333" stroke-width="2"/></svg>
<div class="a" style="left:0.00px;top:172.00px;width:1024.00px;height:337.50px;background:#eeeeee;"></div>
<div class="a" style="left:0.00px;top:172.00px;width:1007.70px;height:14.50px;background:#eeeeee;"></div>
<div class="a" style="left:0.00px;top:172.00px;width:19.00px;height:336.00px;background:#eeeeee;"></div>
<div class="a" style="left:19.00px;top:186.50px;width:988.70px;height:321.50px;background:#fff;"></div>
<div class="a" style="left:19.00px;top:172.00px;width:58.60px;height:14.50px;background:#d3d3d3;"></div>
<div class="a" style="left:0.00px;top:186.00px;width:1007.70px;height:1.00px;background:#bdbdbd;"></div>
<svg class="a" style="left:7.50px;top:175.50px" width="10" height="9.5" viewBox="0 0 10 9.5"><path d="M9.5 0 V9 H0.5 Z" fill="#c9c9c9"/></svg>
<span class="t" style="left:44.87px;top:174px;font-size:9.5px;line-height:11px;color:#217346;letter-spacing:0.000px;font-weight:bold;">A</span>
<span class="t" style="left:111.55px;top:174px;font-size:9px;line-height:11px;color:#444;letter-spacing:0.000px;">B</span>
<span class="t" style="left:166.70px;top:174px;font-size:9px;line-height:11px;color:#444;letter-spacing:0.000px;">C</span>
<span class="t" style="left:227.95px;top:174px;font-size:9px;line-height:11px;color:#444;letter-spacing:0.000px;">D</span>
<span class="t" style="left:294.75px;top:174px;font-size:9px;line-height:11px;color:#444;letter-spacing:0.000px;">E</span>
<span class="t" style="left:344.15px;top:174px;font-size:9px;line-height:11px;color:#444;letter-spacing:0.000px;">F</span>
<span class="t" style="left:394.40px;top:174px;font-size:9px;line-height:11px;color:#444;letter-spacing:0.000px;">G</span>
<span class="t" style="left:444.50px;top:174px;font-size:9px;line-height:11px;color:#444;letter-spacing:0.000px;">H</span>
<span class="t" style="left:494.65px;top:174px;font-size:9px;line-height:11px;color:#444;letter-spacing:0.000px;">I</span>
<span class="t" style="left:541.45px;top:174px;font-size:9px;line-height:11px;color:#444;letter-spacing:0.000px;">J</span>
<span class="t" style="left:588.60px;top:174px;font-size:9px;line-height:11px;color:#444;letter-spacing:0.000px;">K</span>
<span class="t" style="left:637.10px;top:174px;font-size:9px;line-height:11px;color:#444;letter-spacing:0.000px;">L</span>
<span class="t" style="left:683.85px;top:174px;font-size:9px;line-height:11px;color:#444;letter-spacing:0.000px;">M</span>
<span class="t" style="left:732.35px;top:174px;font-size:9px;line-height:11px;color:#444;letter-spacing:0.000px;">N</span>
<span class="t" style="left:780.10px;top:174px;font-size:9px;line-height:11px;color:#444;letter-spacing:0.000px;">O</span>
<span class="t" style="left:828.60px;top:174px;font-size:9px;line-height:11px;color:#444;letter-spacing:0.000px;">P</span>
<span class="t" style="left:876.10px;top:174px;font-size:9px;line-height:11px;color:#444;letter-spacing:0.000px;">Q</span>
<span class="t" style="left:924.35px;top:174px;font-size:9px;line-height:11px;color:#444;letter-spacing:0.000px;">R</span>
<span class="t" style="left:972.60px;top:174px;font-size:9px;line-height:11px;color:#444;letter-spacing:0.000px;">S</span>
<div class="a" style="left:18.50px;top:173.00px;width:1.00px;height:13.50px;background:#b8b8b8;"></div>
<div class="a" style="left:77.10px;top:173.00px;width:1.00px;height:13.50px;background:#b8b8b8;"></div>
<div class="a" style="left:151.00px;top:173.00px;width:1.00px;height:13.50px;background:#b8b8b8;"></div>
<div class="a" style="left:187.90px;top:173.00px;width:1.00px;height:13.50px;background:#b8b8b8;"></div>
<div class="a" style="left:273.50px;top:173.00px;width:1.00px;height:13.50px;background:#b8b8b8;"></div>
<div class="a" style="left:321.00px;top:173.00px;width:1.00px;height:13.50px;background:#b8b8b8;"></div>
<div class="a" style="left:371.80px;top:173.00px;width:1.00px;height:13.50px;background:#b8b8b8;"></div>
<div class="a" style="left:423.00px;top:173.00px;width:1.00px;height:13.50px;background:#b8b8b8;"></div>
<div class="a" style="left:471.50px;top:173.00px;width:1.00px;height:13.50px;background:#b8b8b8;"></div>
<div class="a" style="left:519.30px;top:173.00px;width:1.00px;height:13.50px;background:#b8b8b8;"></div>
<div class="a" style="left:567.10px;top:173.00px;width:1.00px;height:13.50px;background:#b8b8b8;"></div>
<div class="a" style="left:615.10px;top:173.00px;width:1.00px;height:13.50px;background:#b8b8b8;"></div>
<div class="a" style="left:663.10px;top:173.00px;width:1.00px;height:13.50px;background:#b8b8b8;"></div>
<div class="a" style="left:711.10px;top:173.00px;width:1.00px;height:13.50px;background:#b8b8b8;"></div>
<div class="a" style="left:759.10px;top:173.00px;width:1.00px;height:13.50px;background:#b8b8b8;"></div>
<div class="a" style="left:807.10px;top:173.00px;width:1.00px;height:13.50px;background:#b8b8b8;"></div>
<div class="a" style="left:855.10px;top:173.00px;width:1.00px;height:13.50px;background:#b8b8b8;"></div>
<div class="a" style="left:903.10px;top:173.00px;width:1.00px;height:13.50px;background:#b8b8b8;"></div>
<div class="a" style="left:951.10px;top:173.00px;width:1.00px;height:13.50px;background:#b8b8b8;"></div>
<div class="a" style="left:999.10px;top:173.00px;width:1.00px;height:13.50px;background:#b8b8b8;"></div>
<div class="a" style="left:19.00px;top:184.80px;width:58.60px;height:2.20px;background:#2a7d4f;"></div>
<div class="a" style="left:77.10px;top:186.50px;width:1.00px;height:321.50px;background:#dadada;"></div>
<div class="a" style="left:151.00px;top:186.50px;width:1.00px;height:321.50px;background:#dadada;"></div>
<div class="a" style="left:187.90px;top:186.50px;width:1.00px;height:321.50px;background:#dadada;"></div>
<div class="a" style="left:273.50px;top:186.50px;width:1.00px;height:321.50px;background:#dadada;"></div>
<div class="a" style="left:321.00px;top:186.50px;width:1.00px;height:321.50px;background:#dadada;"></div>
<div class="a" style="left:371.80px;top:186.50px;width:1.00px;height:321.50px;background:#dadada;"></div>
<div class="a" style="left:423.00px;top:186.50px;width:1.00px;height:321.50px;background:#dadada;"></div>
<div class="a" style="left:471.50px;top:186.50px;width:1.00px;height:321.50px;background:#dadada;"></div>
<div class="a" style="left:519.30px;top:186.50px;width:1.00px;height:321.50px;background:#dadada;"></div>
<div class="a" style="left:567.10px;top:186.50px;width:1.00px;height:321.50px;background:#dadada;"></div>
<div class="a" style="left:615.10px;top:186.50px;width:1.00px;height:321.50px;background:#dadada;"></div>
<div class="a" style="left:663.10px;top:186.50px;width:1.00px;height:321.50px;background:#dadada;"></div>
<div class="a" style="left:711.10px;top:186.50px;width:1.00px;height:321.50px;background:#dadada;"></div>
<div class="a" style="left:759.10px;top:186.50px;width:1.00px;height:321.50px;background:#dadada;"></div>
<div class="a" style="left:807.10px;top:186.50px;width:1.00px;height:321.50px;background:#dadada;"></div>
<div class="a" style="left:855.10px;top:186.50px;width:1.00px;height:321.50px;background:#dadada;"></div>
<div class="a" style="left:903.10px;top:186.50px;width:1.00px;height:321.50px;background:#dadada;"></div>
<div class="a" style="left:951.10px;top:186.50px;width:1.00px;height:321.50px;background:#dadada;"></div>
<div class="a" style="left:999.10px;top:186.50px;width:1.00px;height:321.50px;background:#dadada;"></div>
<div class="a" style="left:1007.20px;top:186.50px;width:1.00px;height:321.50px;background:#dadada;"></div>
<div class="a" style="left:18.50px;top:186.50px;width:1.00px;height:321.50px;background:#c4c4c4;"></div>
<div class="a" style="left:0.00px;top:201.00px;width:1007.70px;height:1.00px;background:#dadada;"></div>
<span class="t" style="left:6.96px;top:190px;font-size:9.5px;line-height:11px;color:#444;letter-spacing:0.000px;">1</span>
<div class="a" style="left:0.00px;top:216.00px;width:1007.70px;height:1.00px;background:#dadada;"></div>
<span class="t" style="left:6.96px;top:205px;font-size:9.5px;line-height:11px;color:#444;letter-spacing:0.000px;">2</span>
<div class="a" style="left:0.00px;top:231.00px;width:1007.70px;height:1.00px;background:#dadada;"></div>
<span class="t" style="left:6.96px;top:220px;font-size:9.5px;line-height:11px;color:#444;letter-spacing:0.000px;">3</span>
<div class="a" style="left:0.00px;top:246.00px;width:1007.70px;height:1.00px;background:#dadada;"></div>
<span class="t" style="left:6.96px;top:235px;font-size:9.5px;line-height:11px;color:#444;letter-spacing:0.000px;">4</span>
<div class="a" style="left:0.00px;top:261.00px;width:1007.70px;height:1.00px;background:#dadada;"></div>
<span class="t" style="left:6.96px;top:250px;font-size:9.5px;line-height:11px;color:#444;letter-spacing:0.000px;">5</span>
<div class="a" style="left:0.00px;top:276.00px;width:1007.70px;height:1.00px;background:#dadada;"></div>
<span class="t" style="left:6.96px;top:265px;font-size:9.5px;line-height:11px;color:#444;letter-spacing:0.000px;">6</span>
<div class="a" style="left:0.00px;top:291.00px;width:1007.70px;height:1.00px;background:#dadada;"></div>
<span class="t" style="left:6.96px;top:280px;font-size:9.5px;line-height:11px;color:#444;letter-spacing:0.000px;">7</span>
<div class="a" style="left:0.00px;top:306.00px;width:1007.70px;height:1.00px;background:#dadada;"></div>
<span class="t" style="left:6.96px;top:295px;font-size:9.5px;line-height:11px;color:#444;letter-spacing:0.000px;">8</span>
<div class="a" style="left:0.00px;top:321.00px;width:1007.70px;height:1.00px;background:#dadada;"></div>
<span class="t" style="left:6.96px;top:310px;font-size:9.5px;line-height:11px;color:#444;letter-spacing:0.000px;">9</span>
<div class="a" style="left:0.00px;top:336.00px;width:1007.70px;height:1.00px;background:#dadada;"></div>
<span class="t" style="left:4.32px;top:325px;font-size:9.5px;line-height:11px;color:#444;letter-spacing:0.000px;">10</span>
<div class="a" style="left:0.00px;top:351.00px;width:1007.70px;height:1.00px;background:#dadada;"></div>
<span class="t" style="left:4.67px;top:340px;font-size:9.5px;line-height:11px;color:#444;letter-spacing:0.000px;">11</span>
<div class="a" style="left:0.00px;top:366.00px;width:1007.70px;height:1.00px;background:#dadada;"></div>
<span class="t" style="left:4.32px;top:355px;font-size:9.5px;line-height:11px;color:#444;letter-spacing:0.000px;">12</span>
<div class="a" style="left:0.00px;top:381.00px;width:1007.70px;height:1.00px;background:#dadada;"></div>
<span class="t" style="left:4.32px;top:370px;font-size:9.5px;line-height:11px;color:#444;letter-spacing:0.000px;">13</span>
<div class="a" style="left:0.00px;top:396.00px;width:1007.70px;height:1.00px;background:#dadada;"></div>
<span class="t" style="left:4.32px;top:385px;font-size:9.5px;line-height:11px;color:#444;letter-spacing:0.000px;">14</span>
<div class="a" style="left:0.00px;top:411.00px;width:1007.70px;height:1.00px;background:#dadada;"></div>
<span class="t" style="left:4.32px;top:400px;font-size:9.5px;line-height:11px;color:#444;letter-spacing:0.000px;">15</span>
<div class="a" style="left:0.00px;top:426.00px;width:1007.70px;height:1.00px;background:#dadada;"></div>
<span class="t" style="left:4.32px;top:415px;font-size:9.5px;line-height:11px;color:#444;letter-spacing:0.000px;">16</span>
<div class="a" style="left:0.00px;top:441.00px;width:1007.70px;height:1.00px;background:#dadada;"></div>
<span class="t" style="left:4.32px;top:430px;font-size:9.5px;line-height:11px;color:#444;letter-spacing:0.000px;">17</span>
<div class="a" style="left:0.00px;top:456.00px;width:1007.70px;height:1.00px;background:#dadada;"></div>
<span class="t" style="left:4.32px;top:445px;font-size:9.5px;line-height:11px;color:#444;letter-spacing:0.000px;">18</span>
<div class="a" style="left:0.00px;top:471.00px;width:1007.70px;height:1.00px;background:#dadada;"></div>
<span class="t" style="left:4.32px;top:460px;font-size:9.5px;line-height:11px;color:#444;letter-spacing:0.000px;">19</span>
<div class="a" style="left:0.00px;top:486.00px;width:1007.70px;height:1.00px;background:#dadada;"></div>
<span class="t" style="left:4.32px;top:475px;font-size:9.5px;line-height:11px;color:#444;letter-spacing:0.000px;">20</span>
<div class="a" style="left:0.00px;top:501.00px;width:1007.70px;height:1.00px;background:#dadada;"></div>
<span class="t" style="left:4.32px;top:490px;font-size:9.5px;line-height:11px;color:#444;letter-spacing:0.000px;">21</span>
<div class="a" style="left:0;top:0;width:19px;height:508px;overflow:hidden"><span class="t" style="left:4.32px;top:505px;font-size:9.5px;line-height:11px;color:#444;letter-spacing:0.000px;">22</span></div>
<span class="t" style="left:79.80px;top:220px;font-size:10px;line-height:12px;color:#1a1a1a;letter-spacing:0.007px;-webkit-text-stroke:0.12px #1a1a1a;">Column Labels</span>
<span class="t" style="left:79.80px;top:235px;font-size:10px;line-height:12px;color:#1a1a1a;letter-spacing:0.141px;-webkit-text-stroke:0.12px #1a1a1a;">Unique Names</span>
<span class="t" style="left:190.60px;top:235px;font-size:10px;line-height:12px;color:#1a1a1a;letter-spacing:0.238px;-webkit-text-stroke:0.12px #1a1a1a;">Number of Births</span>
<span class="t" style="left:323.70px;top:235px;font-size:10px;line-height:12px;color:#1a1a1a;letter-spacing:0.270px;-webkit-text-stroke:0.12px #1a1a1a;">Diversity</span>
<span class="t" style="left:425.70px;top:235px;font-size:10px;line-height:12px;color:#1a1a1a;letter-spacing:-0.108px;-webkit-text-stroke:0.12px #1a1a1a;">Sex Ratio</span>
<span class="t" style="left:21.20px;top:250px;font-size:10px;line-height:12px;color:#1a1a1a;letter-spacing:-0.140px;-webkit-text-stroke:0.12px #1a1a1a;">Row Labels</span>
<span class="t" style="left:79.80px;top:250px;font-size:10px;line-height:12px;color:#1a1a1a;letter-spacing:-0.300px;transform:scaleX(0.7918);transform-origin:0 50%;-webkit-text-stroke:0.12px #1a1a1a;">F</span>
<span class="t" style="left:153.70px;top:250px;font-size:10px;line-height:12px;color:#1a1a1a;letter-spacing:-0.300px;transform:scaleX(0.9215);transform-origin:0 50%;-webkit-text-stroke:0.12px #1a1a1a;">M</span>
<span class="t" style="left:190.60px;top:250px;font-size:10px;line-height:12px;color:#1a1a1a;letter-spacing:-0.300px;transform:scaleX(0.7918);transform-origin:0 50%;-webkit-text-stroke:0.12px #1a1a1a;">F</span>
<span class="t" style="left:276.20px;top:250px;font-size:10px;line-height:12px;color:#1a1a1a;letter-spacing:-0.300px;transform:scaleX(0.9215);transform-origin:0 50%;-webkit-text-stroke:0.12px #1a1a1a;">M</span>
<span class="t" style="left:323.70px;top:250px;font-size:10px;line-height:12px;color:#1a1a1a;letter-spacing:-0.300px;transform:scaleX(0.7918);transform-origin:0 50%;-webkit-text-stroke:0.12px #1a1a1a;">F</span>
<span class="t" style="left:374.50px;top:250px;font-size:10px;line-height:12px;color:#1a1a1a;letter-spacing:-0.300px;transform:scaleX(0.9215);transform-origin:0 50%;-webkit-text-stroke:0.12px #1a1a1a;">M</span>
<span class="t" style="left:425.70px;top:250px;font-size:10px;line-height:12px;color:#1a1a1a;letter-spacing:0.241px;-webkit-text-stroke:0.12px #1a1a1a;">Actual</span>
<span class="t" style="left:474.20px;top:250px;font-size:10px;line-height:12px;color:#1a1a1a;letter-spacing:0.673px;-webkit-text-stroke:0.12px #1a1a1a;">Minimum</span>
<span class="t" style="left:522.00px;top:250px;font-size:10px;line-height:12px;color:#1a1a1a;letter-spacing:0.444px;-webkit-text-stroke:0.12px #1a1a1a;">Maximum</span>
<div class="a cells" style="left:0;top:0;width:1024px;height:508px;overflow:hidden"><span class="t" style="right:949.00px;top:265px;font-size:9.5px;line-height:11px;color:#1a1a1a;">1910</span><span class="t" style="right:875.10px;top:265px;font-size:9.5px;line-height:11px;color:#1a1a1a;">233</span><span class="t" style="right:838.20px;top:265px;font-size:9.5px;line-height:11px;color:#1a1a1a;">130</span><span class="t" style="right:752.60px;top:265px;font-size:9.5px;line-height:11px;color:#1a1a1a;">5950</span><span class="t" style="right:705.10px;top:265px;font-size:9.5px;line-height:11px;color:#1a1a1a;">3214</span><span class="t" style="right:654.30px;top:265px;font-size:9.5px;line-height:11px;color:#1a1a1a;">0.0391597</span><span class="t" style="right:603.10px;top:265px;font-size:9.5px;line-height:11px;color:#1a1a1a;">0.040448</span><span class="t" style="right:554.60px;top:265px;font-size:9.5px;line-height:11px;color:#1a1a1a;">54.01681</span><span class="t" style="right:506.80px;top:265px;font-size:9.5px;line-height:11px;color:#1a1a1a;">103</span><span class="t" style="right:459.00px;top:265px;font-size:9.5px;line-height:11px;color:#1a1a1a;">108</span><span class="t" style="right:949.00px;top:280px;font-size:9.5px;line-height:11px;color:#1a1a1a;">1911</span><span class="t" style="right:875.10px;top:280px;font-size:9.5px;line-height:11px;color:#1a1a1a;">251</span><span class="t" style="right:838.20px;top:280px;font-size:9.5px;line-height:11px;color:#1a1a1a;">142</span><span class="t" style="right:752.60px;top:280px;font-size:9.5px;line-height:11px;color:#1a1a1a;">6602</span><span class="t" style="right:705.10px;top:280px;font-size:9.5px;line-height:11px;color:#1a1a1a;">3382</span><span class="t" style="right:654.30px;top:280px;font-size:9.5px;line-height:11px;color:#1a1a1a;">0.0380188</span><span class="t" style="right:603.10px;top:280px;font-size:9.5px;line-height:11px;color:#1a1a1a;">0.041987</span><span class="t" style="right:554.60px;top:280px;font-size:9.5px;line-height:11px;color:#1a1a1a;">51.2269</span><span class="t" style="right:506.80px;top:280px;font-size:9.5px;line-height:11px;color:#1a1a1a;">103</span><span class="t" style="right:459.00px;top:280px;font-size:9.5px;line-height:11px;color:#1a1a1a;">108</span><span class="t" style="right:949.00px;top:295px;font-size:9.5px;line-height:11px;color:#1a1a1a;">1912</span><span class="t" style="right:875.10px;top:295px;font-size:9.5px;line-height:11px;color:#1a1a1a;">303</span><span class="t" style="right:838.20px;top:295px;font-size:9.5px;line-height:11px;color:#1a1a1a;">255</span><span class="t" style="right:752.60px;top:295px;font-size:9.5px;line-height:11px;color:#1a1a1a;">9803</span><span class="t" style="right:705.10px;top:295px;font-size:9.5px;line-height:11px;color:#1a1a1a;">8141</span><span class="t" style="right:654.30px;top:295px;font-size:9.5px;line-height:11px;color:#1a1a1a;">0.0309089</span><span class="t" style="right:603.10px;top:295px;font-size:9.5px;line-height:11px;color:#1a1a1a;">0.0313229</span><span class="t" style="right:554.60px;top:295px;font-size:9.5px;line-height:11px;color:#1a1a1a;">83.04601</span><span class="t" style="right:506.80px;top:295px;font-size:9.5px;line-height:11px;color:#1a1a1a;">103</span><span class="t" style="right:459.00px;top:295px;font-size:9.5px;line-height:11px;color:#1a1a1a;">108</span><span class="t" style="right:949.00px;top:310px;font-size:9.5px;line-height:11px;color:#1a1a1a;">1913</span><span class="t" style="right:875.10px;top:310px;font-size:9.5px;line-height:11px;color:#1a1a1a;">333</span><span class="t" style="right:838.20px;top:310px;font-size:9.5px;line-height:11px;color:#1a1a1a;">280</span><span class="t" style="right:752.60px;top:310px;font-size:9.5px;line-height:11px;color:#1a1a1a;">11860</span><span class="t" style="right:705.10px;top:310px;font-size:9.5px;line-height:11px;color:#1a1a1a;">10234</span><span class="t" style="right:654.30px;top:310px;font-size:9.5px;line-height:11px;color:#1a1a1a;">0.0280776</span><span class="t" style="right:603.10px;top:310px;font-size:9.5px;line-height:11px;color:#1a1a1a;">0.0273598</span><span class="t" style="right:554.60px;top:310px;font-size:9.5px;line-height:11px;color:#1a1a1a;">86.29005</span><span class="t" style="right:506.80px;top:310px;font-size:9.5px;line-height:11px;color:#1a1a1a;">103</span><span class="t" style="right:459.00px;top:310px;font-size:9.5px;line-height:11px;color:#1a1a1a;">108</span><span class="t" style="right:949.00px;top:325px;font-size:9.5px;line-height:11px;color:#1a1a1a;">1914</span><span class="t" style="right:875.10px;top:325px;font-size:9.5px;line-height:11px;color:#1a1a1a;">368</span><span class="t" style="right:838.20px;top:325px;font-size:9.5px;line-height:11px;color:#1a1a1a;">342</span><span class="t" style="right:752.60px;top:325px;font-size:9.5px;line-height:11px;color:#1a1a1a;">13815</span><span class="t" style="right:705.10px;top:325px;font-size:9.5px;line-height:11px;color:#1a1a1a;">13109</span><span class="t" style="right:654.30px;top:325px;font-size:9.5px;line-height:11px;color:#1a1a1a;">0.0266377</span><span class="t" style="right:603.10px;top:325px;font-size:9.5px;line-height:11px;color:#1a1a1a;">0.0260889</span><span class="t" style="right:554.60px;top:325px;font-size:9.5px;line-height:11px;color:#1a1a1a;">94.88961</span><span class="t" style="right:506.80px;top:325px;font-size:9.5px;line-height:11px;color:#1a1a1a;">103</span><span class="t" style="right:459.00px;top:325px;font-size:9.5px;line-height:11px;color:#1a1a1a;">108</span><span class="t" style="right:949.00px;top:340px;font-size:9.5px;line-height:11px;color:#1a1a1a;">1915</span><span class="t" style="right:875.10px;top:340px;font-size:9.5px;line-height:11px;color:#1a1a1a;">462</span><span class="t" style="right:838.20px;top:340px;font-size:9.5px;line-height:11px;color:#1a1a1a;">375</span><span class="t" style="right:752.60px;top:340px;font-size:9.5px;line-height:11px;color:#1a1a1a;">18642</span><span class="t" style="right:705.10px;top:340px;font-size:9.5px;line-height:11px;color:#1a1a1a;">17194</span><span class="t" style="right:654.30px;top:340px;font-size:9.5px;line-height:11px;color:#1a1a1a;">0.0247827</span><span class="t" style="right:603.10px;top:340px;font-size:9.5px;line-height:11px;color:#1a1a1a;">0.0218099</span><span class="t" style="right:554.60px;top:340px;font-size:9.5px;line-height:11px;color:#1a1a1a;">92.23259</span><span class="t" style="right:506.80px;top:340px;font-size:9.5px;line-height:11px;color:#1a1a1a;">103</span><span class="t" style="right:459.00px;top:340px;font-size:9.5px;line-height:11px;color:#1a1a1a;">108</span><span class="t" style="right:949.00px;top:355px;font-size:9.5px;line-height:11px;color:#1a1a1a;">1916</span><span class="t" style="right:875.10px;top:355px;font-size:9.5px;line-height:11px;color:#1a1a1a;">467</span><span class="t" style="right:838.20px;top:355px;font-size:9.5px;line-height:11px;color:#1a1a1a;">403</span><span class="t" style="right:752.60px;top:355px;font-size:9.5px;line-height:11px;color:#1a1a1a;">19554</span><span class="t" style="right:705.10px;top:355px;font-size:9.5px;line-height:11px;color:#1a1a1a;">17956</span><span class="t" style="right:654.30px;top:355px;font-size:9.5px;line-height:11px;color:#1a1a1a;">0.0238826</span><span class="t" style="right:603.10px;top:355px;font-size:9.5px;line-height:11px;color:#1a1a1a;">0.0224438</span><span class="t" style="right:554.60px;top:355px;font-size:9.5px;line-height:11px;color:#1a1a1a;">91.82776</span><span class="t" style="right:506.80px;top:355px;font-size:9.5px;line-height:11px;color:#1a1a1a;">103</span><span class="t" style="right:459.00px;top:355px;font-size:9.5px;line-height:11px;color:#1a1a1a;">108</span><span class="t" style="right:949.00px;top:370px;font-size:9.5px;line-height:11px;color:#1a1a1a;">1917</span><span class="t" style="right:875.10px;top:370px;font-size:9.5px;line-height:11px;color:#1a1a1a;">477</span><span class="t" style="right:838.20px;top:370px;font-size:9.5px;line-height:11px;color:#1a1a1a;">419</span><span class="t" style="right:752.60px;top:370px;font-size:9.5px;line-height:11px;color:#1a1a1a;">20867</span><span class="t" style="right:705.10px;top:370px;font-size:9.5px;line-height:11px;color:#1a1a1a;">19060</span><span class="t" style="right:654.30px;top:370px;font-size:9.5px;line-height:11px;color:#1a1a1a;">0.0228591</span><span class="t" style="right:603.10px;top:370px;font-size:9.5px;line-height:11px;color:#1a1a1a;">0.0219832</span><span class="t" style="right:554.60px;top:370px;font-size:9.5px;line-height:11px;color:#1a1a1a;">91.34039</span><span class="t" style="right:506.80px;top:370px;font-size:9.5px;line-height:11px;color:#1a1a1a;">103</span><span class="t" style="right:459.00px;top:370px;font-size:9.5px;line-height:11px;color:#1a1a1a;">108</span><span class="t" style="right:949.00px;top:385px;font-size:9.5px;line-height:11px;color:#1a1a1a;">1918</span><span class="t" style="right:875.10px;top:385px;font-size:9.5px;line-height:11px;color:#1a1a1a;">511</span><span class="t" style="right:838.20px;top:385px;font-size:9.5px;line-height:11px;color:#1a1a1a;">449</span><span class="t" style="right:752.60px;top:385px;font-size:9.5px;line-height:11px;color:#1a1a1a;">23052</span><span class="t" style="right:705.10px;top:385px;font-size:9.5px;line-height:11px;color:#1a1a1a;">21646</span><span class="t" style="right:654.30px;top:385px;font-size:9.5px;line-height:11px;color:#1a1a1a;">0.0221673</span><span class="t" style="right:603.10px;top:385px;font-size:9.5px;line-height:11px;color:#1a1a1a;">0.0207429</span><span class="t" style="right:554.60px;top:385px;font-size:9.5px;line-height:11px;color:#1a1a1a;">93.90075</span><span class="t" style="right:506.80px;top:385px;font-size:9.5px;line-height:11px;color:#1a1a1a;">103</span><span class="t" style="right:459.00px;top:385px;font-size:9.5px;line-height:11px;color:#1a1a1a;">108</span><span class="t" style="right:949.00px;top:400px;font-size:9.5px;line-height:11px;color:#1a1a1a;">1919</span><span class="t" style="right:875.10px;top:400px;font-size:9.5px;line-height:11px;color:#1a1a1a;">520</span><span class="t" style="right:838.20px;top:400px;font-size:9.5px;line-height:11px;color:#1a1a1a;">460</span><span class="t" style="right:752.60px;top:400px;font-size:9.5px;line-height:11px;color:#1a1a1a;">23288</span><span class="t" style="right:705.10px;top:400px;font-size:9.5px;line-height:11px;color:#1a1a1a;">21823</span><span class="t" style="right:654.30px;top:400px;font-size:9.5px;line-height:11px;color:#1a1a1a;">0.0223291</span><span class="t" style="right:603.10px;top:400px;font-size:9.5px;line-height:11px;color:#1a1a1a;">0.0210787</span><span class="t" style="right:554.60px;top:400px;font-size:9.5px;line-height:11px;color:#1a1a1a;">93.70921</span><span class="t" style="right:506.80px;top:400px;font-size:9.5px;line-height:11px;color:#1a1a1a;">103</span><span class="t" style="right:459.00px;top:400px;font-size:9.5px;line-height:11px;color:#1a1a1a;">108</span><span class="t" style="right:949.00px;top:415px;font-size:9.5px;line-height:11px;color:#1a1a1a;">1920</span><span class="t" style="right:875.10px;top:415px;font-size:9.5px;line-height:11px;color:#1a1a1a;">578</span><span class="t" style="right:838.20px;top:415px;font-size:9.5px;line-height:11px;color:#1a1a1a;">518</span><span class="t" style="right:752.60px;top:415px;font-size:9.5px;line-height:11px;color:#1a1a1a;">28133</span><span class="t" style="right:705.10px;top:415px;font-size:9.5px;line-height:11px;color:#1a1a1a;">26012</span><span class="t" style="right:654.30px;top:415px;font-size:9.5px;line-height:11px;color:#1a1a1a;">0.0205453</span><span class="t" style="right:603.10px;top:415px;font-size:9.5px;line-height:11px;color:#1a1a1a;">0.0199139</span><span class="t" style="right:554.60px;top:415px;font-size:9.5px;line-height:11px;color:#1a1a1a;">92.46081</span><span class="t" style="right:506.80px;top:415px;font-size:9.5px;line-height:11px;color:#1a1a1a;">103</span><span class="t" style="right:459.00px;top:415px;font-size:9.5px;line-height:11px;color:#1a1a1a;">108</span><span class="t" style="right:949.00px;top:430px;font-size:9.5px;line-height:11px;color:#1a1a1a;">1921</span><span class="t" style="right:875.10px;top:430px;font-size:9.5px;line-height:11px;color:#1a1a1a;">608</span><span class="t" style="right:838.20px;top:430px;font-size:9.5px;line-height:11px;color:#1a1a1a;">521</span><span class="t" style="right:752.60px;top:430px;font-size:9.5px;line-height:11px;color:#1a1a1a;">30476</span><span class="t" style="right:705.10px;top:430px;font-size:9.5px;line-height:11px;color:#1a1a1a;">28501</span><span class="t" style="right:654.30px;top:430px;font-size:9.5px;line-height:11px;color:#1a1a1a;">0.0199501</span><span class="t" style="right:603.10px;top:430px;font-size:9.5px;line-height:11px;color:#1a1a1a;">0.0182801</span><span class="t" style="right:554.60px;top:430px;font-size:9.5px;line-height:11px;color:#1a1a1a;">93.51949</span><span class="t" style="right:506.80px;top:430px;font-size:9.5px;line-height:11px;color:#1a1a1a;">103</span><span class="t" style="right:459.00px;top:430px;font-size:9.5px;line-height:11px;color:#1a1a1a;">108</span><span class="t" style="right:949.00px;top:445px;font-size:9.5px;line-height:11px;color:#1a1a1a;">1922</span><span class="t" style="right:875.10px;top:445px;font-size:9.5px;line-height:11px;color:#1a1a1a;">602</span><span class="t" style="right:838.20px;top:445px;font-size:9.5px;line-height:11px;color:#1a1a1a;">524</span><span class="t" style="right:752.60px;top:445px;font-size:9.5px;line-height:11px;color:#1a1a1a;">30915</span><span class="t" style="right:705.10px;top:445px;font-size:9.5px;line-height:11px;color:#1a1a1a;">30103</span><span class="t" style="right:654.30px;top:445px;font-size:9.5px;line-height:11px;color:#1a1a1a;">0.0194727</span><span class="t" style="right:603.10px;top:445px;font-size:9.5px;line-height:11px;color:#1a1a1a;">0.0174069</span><span class="t" style="right:554.60px;top:445px;font-size:9.5px;line-height:11px;color:#1a1a1a;">97.37344</span><span class="t" style="right:506.80px;top:445px;font-size:9.5px;line-height:11px;color:#1a1a1a;">103</span><span class="t" style="right:459.00px;top:445px;font-size:9.5px;line-height:11px;color:#1a1a1a;">108</span><span class="t" style="right:949.00px;top:460px;font-size:9.5px;line-height:11px;color:#1a1a1a;">1923</span><span class="t" style="right:875.10px;top:460px;font-size:9.5px;line-height:11px;color:#1a1a1a;">654</span><span class="t" style="right:838.20px;top:460px;font-size:9.5px;line-height:11px;color:#1a1a1a;">571</span><span class="t" style="right:752.60px;top:460px;font-size:9.5px;line-height:11px;color:#1a1a1a;">34119</span><span class="t" style="right:705.10px;top:460px;font-size:9.5px;line-height:11px;color:#1a1a1a;">33791</span><span class="t" style="right:654.30px;top:460px;font-size:9.5px;line-height:11px;color:#1a1a1a;">0.0191682</span><span class="t" style="right:603.10px;top:460px;font-size:9.5px;line-height:11px;color:#1a1a1a;">0.016898</span><span class="t" style="right:554.60px;top:460px;font-size:9.5px;line-height:11px;color:#1a1a1a;">99.03866</span><span class="t" style="right:506.80px;top:460px;font-size:9.5px;line-height:11px;color:#1a1a1a;">103</span><span class="t" style="right:459.00px;top:460px;font-size:9.5px;line-height:11px;color:#1a1a1a;">108</span><span class="t" style="right:949.00px;top:475px;font-size:9.5px;line-height:11px;color:#1a1a1a;">1924</span><span class="t" style="right:875.10px;top:475px;font-size:9.5px;line-height:11px;color:#1a1a1a;">689</span><span class="t" style="right:838.20px;top:475px;font-size:9.5px;line-height:11px;color:#1a1a1a;">599</span><span class="t" style="right:752.60px;top:475px;font-size:9.5px;line-height:11px;color:#1a1a1a;">37886</span><span class="t" style="right:705.10px;top:475px;font-size:9.5px;line-height:11px;color:#1a1a1a;">36553</span><span class="t" style="right:654.30px;top:475px;font-size:9.5px;line-height:11px;color:#1a1a1a;">0.0181861</span><span class="t" style="right:603.10px;top:475px;font-size:9.5px;line-height:11px;color:#1a1a1a;">0.0163872</span><span class="t" style="right:554.60px;top:475px;font-size:9.5px;line-height:11px;color:#1a1a1a;">96.48155</span><span class="t" style="right:506.80px;top:475px;font-size:9.5px;line-height:11px;color:#1a1a1a;">103</span><span class="t" style="right:459.00px;top:475px;font-size:9.5px;line-height:11px;color:#1a1a1a;">108</span><span class="t" style="right:949.00px;top:490px;font-size:9.5px;line-height:11px;color:#1a1a1a;">1925</span><span class="t" style="right:875.10px;top:490px;font-size:9.5px;line-height:11px;color:#1a1a1a;">702</span><span class="t" style="right:838.20px;top:490px;font-size:9.5px;line-height:11px;color:#1a1a1a;">591</span><span class="t" style="right:752.60px;top:490px;font-size:9.5px;line-height:11px;color:#1a1a1a;">36904</span><span class="t" style="right:705.10px;top:490px;font-size:9.5px;line-height:11px;color:#1a1a1a;">36581</span><span class="t" style="right:654.30px;top:490px;font-size:9.5px;line-height:11px;color:#1a1a1a;">0.0190223</span><span class="t" style="right:603.10px;top:490px;font-size:9.5px;line-height:11px;color:#1a1a1a;">0.0161559</span><span class="t" style="right:554.60px;top:490px;font-size:9.5px;line-height:11px;color:#1a1a1a;">99.12476</span><span class="t" style="right:506.80px;top:490px;font-size:9.5px;line-height:11px;color:#1a1a1a;">103</span><span class="t" style="right:459.00px;top:490px;font-size:9.5px;line-height:11px;color:#1a1a1a;">108</span><span class="t" style="right:949.00px;top:505px;font-size:9.5px;line-height:11px;color:#1a1a1a;">1926</span><span class="t" style="right:875.10px;top:505px;font-size:9.5px;line-height:11px;color:#1a1a1a;">685</span><span class="t" style="right:838.20px;top:505px;font-size:9.5px;line-height:11px;color:#1a1a1a;">585</span><span class="t" style="right:752.60px;top:505px;font-size:9.5px;line-height:11px;color:#1a1a1a;">36121</span><span class="t" style="right:705.10px;top:505px;font-size:9.5px;line-height:11px;color:#1a1a1a;">36801</span><span class="t" style="right:654.30px;top:505px;font-size:9.5px;line-height:11px;color:#1a1a1a;">0.018964</span><span class="t" style="right:603.10px;top:505px;font-size:9.5px;line-height:11px;color:#1a1a1a;">0.016168</span><span class="t" style="right:554.60px;top:505px;font-size:9.5px;line-height:11px;color:#1a1a1a;">101.8826</span><span class="t" style="right:506.80px;top:505px;font-size:9.5px;line-height:11px;color:#1a1a1a;">103</span><span class="t" style="right:459.00px;top:505px;font-size:9.5px;line-height:11px;color:#1a1a1a;">108</span></div>
<!-- gen_chart -->
<div class="a" style="left:576.20px;top:188.40px;width:426.40px;height:272.60px;background:#fff;border:1px solid #d2d2d2;"></div>
<svg class="a" style="left:0;top:0" width="1024" height="546" viewBox="0 0 1024 546"><path d="M626.60 225.20H982.40" stroke="#d9d9d9" stroke-width="1"/><path d="M626.60 249.20H982.40" stroke="#d9d9d9" stroke-width="1"/><path d="M626.60 273.20H982.40" stroke="#d9d9d9" stroke-width="1"/><path d="M626.60 297.20H982.40" stroke="#d9d9d9" stroke-width="1"/><path d="M626.60 321.20H982.40" stroke="#d9d9d9" stroke-width="1"/><path d="M626.60 345.20H982.40" stroke="#d9d9d9" stroke-width="1"/><path d="M626.60 369.20H982.40" stroke="#d9d9d9" stroke-width="1"/><path d="M626.60 393.20H982.40" stroke="#d9d9d9" stroke-width="1"/><path d="M626.60 225.20V393.20" stroke="#d9d9d9" stroke-width="1"/><path d="M685.90 225.20V393.20" stroke="#d9d9d9" stroke-width="1"/><path d="M745.20 225.20V393.20" stroke="#d9d9d9" stroke-width="1"/><path d="M804.50 225.20V393.20" stroke="#d9d9d9" stroke-width="1"/><path d="M863.80 225.20V393.20" stroke="#d9d9d9" stroke-width="1"/><path d="M923.10 225.20V393.20" stroke="#d9d9d9" stroke-width="1"/><path d="M982.40 225.20V393.20" stroke="#d9d9d9" stroke-width="1"/><path d="M656.25 254.00H961.64" stroke="#9c9c9c" stroke-width="1.6"/><path d="M656.25 266.00H961.64" stroke="#ed7d31" stroke-width="1.6"/><polyline points="656.25,383.55 659.22,390.25 662.18,313.88 665.14,306.10 668.11,285.46 671.08,291.85 674.04,292.81 677.00,293.98 679.97,287.84 682.94,288.30 685.90,291.30 688.87,288.75 691.83,279.51 694.80,275.50 697.76,281.65 700.73,275.31 703.69,268.69 706.65,268.40 709.62,267.92 712.59,268.64 715.55,267.68 718.51,264.32 721.48,265.52 724.45,265.04 727.41,263.60 730.38,260.72 733.34,264.56 736.31,258.32 739.27,258.80 742.24,260.72 745.20,259.76 748.16,260.24 751.13,259.04 754.10,260.96 757.06,259.04 760.02,258.80 762.99,257.36 765.96,258.32 768.92,259.28 771.88,258.08 774.85,255.20 777.82,255.92 780.78,256.40 783.75,256.40 786.71,255.68 789.67,252.80 792.64,255.44 795.61,254.48 798.57,255.92 801.53,254.00 804.50,254.48 807.46,254.00 810.43,254.24 813.39,253.76 816.36,256.88 819.33,253.04 822.29,254.00 825.25,252.56 828.22,251.84 831.18,251.84 834.15,252.56 837.12,251.60 840.08,249.68 843.05,248.48 846.01,248.72 848.98,249.44 851.94,248.48 854.90,248.00 857.87,248.48 860.84,248.24 863.80,247.04 866.76,247.28 869.73,248.72 872.69,248.48 875.66,248.48 878.62,248.24 881.59,249.68 884.56,246.08 887.52,248.00 890.49,248.48 893.45,248.00 896.41,248.72 899.38,247.04 902.35,248.00 905.31,248.48 908.27,246.80 911.24,247.76 914.20,248.48 917.17,248.48 920.13,247.76 923.10,246.80 926.07,248.48 929.03,249.20 931.99,246.80 934.96,248.72 937.92,248.48 940.89,247.04 943.86,247.04 946.82,247.04 949.79,247.04 952.75,247.04 955.71,247.28 958.68,248.72 961.64,247.04" fill="none" stroke="#5b9bd5" stroke-width="1.6" stroke-linejoin="round"/><path d="M700 446H719.5" stroke="#5b9bd5" stroke-width="1.6"/><path d="M755 446H774.4" stroke="#ed7d31" stroke-width="1.6"/><path d="M823.3 446H843" stroke="#a5a5a5" stroke-width="1.6"/></svg>
<span class="t" style="left:765.00px;top:197px;font-size:13px;line-height:15px;color:#555;letter-spacing:-0.300px;transform:scaleX(0.9897);transform-origin:0 50%;">Sex ratio</span>
<span class="t" style="left:604.60px;top:221px;font-size:8px;line-height:10px;color:#444;letter-spacing:0.126px;">120</span>
<span class="t" style="left:604.60px;top:245px;font-size:8px;line-height:10px;color:#444;letter-spacing:0.423px;">110</span>
<span class="t" style="left:604.60px;top:269px;font-size:8px;line-height:10px;color:#444;letter-spacing:0.126px;">100</span>
<span class="t" style="left:609.00px;top:293px;font-size:8px;line-height:10px;color:#444;letter-spacing:0.302px;">90</span>
<span class="t" style="left:609.00px;top:317px;font-size:8px;line-height:10px;color:#444;letter-spacing:0.302px;">80</span>
<span class="t" style="left:609.00px;top:341px;font-size:8px;line-height:10px;color:#444;letter-spacing:0.302px;">70</span>
<span class="t" style="left:609.00px;top:365px;font-size:8px;line-height:10px;color:#444;letter-spacing:0.302px;">60</span>
<span class="t" style="left:609.00px;top:389px;font-size:8px;line-height:10px;color:#444;letter-spacing:0.302px;">50</span>
<span class="t" style="left:617.40px;top:401px;font-size:8px;line-height:10px;color:#444;letter-spacing:0.201px;">1900</span>
<span class="t" style="left:676.70px;top:401px;font-size:8px;line-height:10px;color:#444;letter-spacing:0.201px;">1920</span>
<span class="t" style="left:736.00px;top:401px;font-size:8px;line-height:10px;color:#444;letter-spacing:0.201px;">1940</span>
<span class="t" style="left:795.30px;top:401px;font-size:8px;line-height:10px;color:#444;letter-spacing:0.201px;">1960</span>
<span class="t" style="left:854.60px;top:401px;font-size:8px;line-height:10px;color:#444;letter-spacing:0.201px;">1980</span>
<span class="t" style="left:913.90px;top:401px;font-size:8px;line-height:10px;color:#444;letter-spacing:0.201px;">2000</span>
<span class="t" style="left:973.20px;top:401px;font-size:8px;line-height:10px;color:#444;letter-spacing:0.201px;">2020</span>
<span class="t" style="left:794.85px;top:416px;font-size:8px;line-height:10px;color:#595959;letter-spacing:0.198px;font-weight:bold;">Year</span>
<span class="t" style="left:536.60px;top:305.00px;width:120px;text-align:center;font-size:8px;line-height:10px;font-weight:bold;color:#595959;letter-spacing:0.238px;transform:rotate(-90deg);transform-origin:50% 50%">Male births per 100 female</span>
<span class="t" style="left:721.60px;top:442px;font-size:8px;line-height:10px;color:#444;letter-spacing:0.033px;">Actual</span>
<span class="t" style="left:776.60px;top:442px;font-size:8px;line-height:10px;color:#444;letter-spacing:0.542px;">Minimum</span>
<span class="t" style="left:844.70px;top:442px;font-size:8px;line-height:10px;color:#444;letter-spacing:0.355px;">Maximum</span>
<div class="a" style="left:0;top:0;width:1024px;height:508px;overflow:hidden"><div class="a" style="left:631.00px;top:466.00px;width:377.00px;height:60.00px;background:#fff;border:1px solid #d2d2d2;"></div><span class="t" style="left:861.30px;top:475px;font-size:13px;line-height:15px;color:#555;letter-spacing:-0.080px;">Diversity</span><span class="t" style="left:658.70px;top:499px;font-size:8px;line-height:10px;color:#444;letter-spacing:0.070px;">0.045</span><div class="a" style="left:687.50px;top:503.00px;width:319.50px;height:1.00px;background:#d9d9d9;"></div><div class="a" style="left:687.00px;top:503.00px;width:1.00px;height:10.00px;background:#d9d9d9;"></div><div class="a" style="left:759.30px;top:503.00px;width:1.00px;height:10.00px;background:#d9d9d9;"></div><div class="a" style="left:831.10px;top:503.00px;width:1.00px;height:10.00px;background:#d9d9d9;"></div><div class="a" style="left:902.90px;top:503.00px;width:1.00px;height:10.00px;background:#d9d9d9;"></div><div class="a" style="left:975.20px;top:503.00px;width:1.00px;height:10.00px;background:#d9d9d9;"></div></div>
<div class="a" style="left:1008.20px;top:172.00px;width:16.00px;height:336.00px;background:#eeeeee;"></div>
<div class="a" style="left:1010.30px;top:184.50px;width:11.20px;height:314.00px;background:#c8c8c8;"></div>
<div class="a" style="left:1010.30px;top:173.00px;width:11.20px;height:11.00px;background:#fff;border:1px solid #ababab;"></div>
<svg class="a" style="left:1012.90px;top:176.50px" width="6" height="4" viewBox="0 0 6 4"><path d="M0 3.6 L3 0.4 L6 3.6Z" fill="#555"/></svg>
<div class="a" style="left:1010.30px;top:184.50px;width:11.20px;height:60.00px;background:#fff;border:1px solid #ababab;"></div>
<div class="a" style="left:1010.30px;top:498.30px;width:11.20px;height:10.40px;background:#fff;border:1px solid #ababab;"></div>
<svg class="a" style="left:1012.90px;top:501.60px" width="6" height="4" viewBox="0 0 6 4"><path d="M0 0.4 L3 3.6 L6 0.4Z" fill="#555"/></svg>
<!-- gen_bottom -->
<div class="a" style="left:0.00px;top:508.00px;width:1024.00px;height:22.00px;background:#eeeeee;"></div>
<div class="a" style="left:0.00px;top:507.80px;width:1009.00px;height:1.00px;background:#bdbdbd;"></div>
<svg class="a" style="left:20.00px;top:516.00px" width="4" height="6" viewBox="0 0 4 6"><path d="M3.6 0.2 L0.6 3 L3.6 5.8Z" fill="#9a9a9a"/></svg>
<svg class="a" style="left:41.50px;top:516.00px" width="4" height="6" viewBox="0 0 4 6"><path d="M0.4 0.2 L3.4 3 L0.4 5.8Z" fill="#9a9a9a"/></svg>
<div class="a" style="left:75.00px;top:511.50px;width:1.00px;height:14.00px;background:#c4c4c4;"></div>
<span class="t" style="left:85.30px;top:514px;font-size:9px;line-height:11px;color:#555;letter-spacing:0.248px;">Pivot</span>
<div class="a" style="left:117.50px;top:508.00px;width:60.00px;height:19.80px;background:#fff;border-left:1px solid #c4c4c4;border-right:1px solid #c4c4c4;"></div>
<div class="a" style="left:117.50px;top:525.80px;width:60.00px;height:2.00px;background:#217346;"></div>
<span class="t" style="left:126.60px;top:514px;font-size:9px;line-height:11px;color:#217346;letter-spacing:0.347px;font-weight:bold;">Diversity</span>
<span class="t" style="left:187.00px;top:514px;font-size:9px;line-height:11px;color:#555;letter-spacing:0.247px;">Pivot 2</span>
<div class="a" style="left:227.30px;top:511.50px;width:1.00px;height:14.00px;background:#c4c4c4;"></div>
<span class="t" style="left:235.20px;top:514px;font-size:9px;line-height:11px;color:#555;letter-spacing:-0.300px;transform:scaleX(0.9997);transform-origin:0 50%;">CA</span>
<div class="a" style="left:257.30px;top:511.50px;width:1.00px;height:14.00px;background:#c4c4c4;"></div>
<svg class="a" style="left:281.50px;top:512.50px" width="12" height="12" viewBox="0 0 12 12"><circle cx="6" cy="6" r="5" fill="none" stroke="#666" stroke-width="1"/><path d="M6 3.2V8.8M3.2 6H8.8" stroke="#555" stroke-width="1.2"/></svg>
<div class="a" style="left:613.80px;top:515.80px;width:1.20px;height:1.20px;background:#777;"></div>
<div class="a" style="left:613.80px;top:518.60px;width:1.20px;height:1.20px;background:#777;"></div>
<div class="a" style="left:613.80px;top:521.40px;width:1.20px;height:1.20px;background:#777;"></div>
<div class="a" style="left:626.80px;top:513.80px;width:381.70px;height:10.80px;background:#c8c8c8;"></div>
<div class="a" style="left:626.80px;top:513.80px;width:10.60px;height:10.80px;background:#fff;border:1px solid #ababab;"></div>
<svg class="a" style="left:630.20px;top:516.20px" width="4" height="6" viewBox="0 0 4 6"><path d="M3.6 0 L0.4 3 L3.6 6Z" fill="#555"/></svg>
<div class="a" style="left:637.40px;top:513.80px;width:309.60px;height:10.80px;background:#fff;border:1px solid #ababab;"></div>
<div class="a" style="left:997.00px;top:513.80px;width:11.50px;height:10.80px;background:#fff;border:1px solid #ababab;"></div>
<svg class="a" style="left:1001.00px;top:516.20px" width="4" height="6" viewBox="0 0 4 6"><path d="M0.4 0 L3.6 3 L0.4 6Z" fill="#555"/></svg>
<div class="a" style="left:0.00px;top:528.60px;width:1024.00px;height:0.80px;background:#f8f8f8;"></div>
<div class="a" style="left:0.00px;top:529.20px;width:1024.00px;height:17.00px;background:#15572c;"></div>
<span class="t" style="left:5.00px;top:534px;font-size:8px;line-height:10px;color:#fff;letter-spacing:-0.300px;transform:scaleX(0.9483);transform-origin:0 50%;">READY</span>
<svg class="a" style="left:44.80px;top:531.80px" width="11" height="10.5" viewBox="0 0 11 10.5"><circle cx="2.3" cy="2.3" r="2.1" fill="#e6efe9"/><rect x="5.4" y="1" width="5.2" height="2.2" fill="#e6efe9"/><rect x="0.5" y="5.3" width="10" height="4.8" fill="none" stroke="#e6efe9" stroke-width="1"/><path d="M3.8 4.2V10.2M7.2 4.2V10.2M0.5 7.6H10.5" stroke="#e6efe9" stroke-width="0.8"/></svg>
<div class="a" style="left:807.00px;top:529.20px;width:25.00px;height:17.00px;background:#0d3d1e;"></div>
<svg class="a" style="left:814.00px;top:533.00px" width="10" height="9" viewBox="0 0 10 9"><rect x="0.5" y="0.5" width="9" height="8" fill="none" stroke="#fff" stroke-width="1"/><path d="M0.5 3.2H9.5M0.5 5.8H9.5M3.5 0.5V8.5M6.5 0.5V8.5" stroke="#fff" stroke-width="0.8"/></svg>
<svg class="a" style="left:843.00px;top:533.00px" width="10" height="9" viewBox="0 0 10 9"><rect x="0.5" y="0.5" width="9" height="8" fill="none" stroke="#e0ebe4" stroke-width="1"/><rect x="2.8" y="2.6" width="4.4" height="4" fill="none" stroke="#e0ebe4" stroke-width="0.8"/><path d="M3.6 4H6.4M3.6 5.4H6.4" stroke="#e0ebe4" stroke-width="0.6"/></svg>
<svg class="a" style="left:871.00px;top:533.00px" width="10" height="9" viewBox="0 0 10 9"><rect x="0.5" y="0.5" width="9" height="8" fill="none" stroke="#e0ebe4" stroke-width="1"/><rect x="0.5" y="0.5" width="4.2" height="4.6" fill="#e0ebe4"/><path d="M7 0.5V5" stroke="#e0ebe4" stroke-width="0.8"/></svg>
<div class="a" style="left:893.50px;top:537.00px;width:4.50px;height:1.20px;background:#fff;"></div>
<div class="a" style="left:902.00px;top:537.20px;width:75.00px;height:1.00px;background:#cfe0d5;"></div>
<div class="a" style="left:937.40px;top:532.60px;width:2.60px;height:9.00px;background:#fff;"></div>
<div class="a" style="left:979.60px;top:537.00px;width:5.40px;height:1.20px;background:#fff;"></div>
<div class="a" style="left:981.70px;top:534.90px;width:1.20px;height:5.40px;background:#fff;"></div>
<span class="t" style="left:997.80px;top:534px;font-size:8px;line-height:10px;color:#fff;letter-spacing:-0.300px;transform:scaleX(0.9611);transform-origin:0 50%;">100%</span>
</body></html>
